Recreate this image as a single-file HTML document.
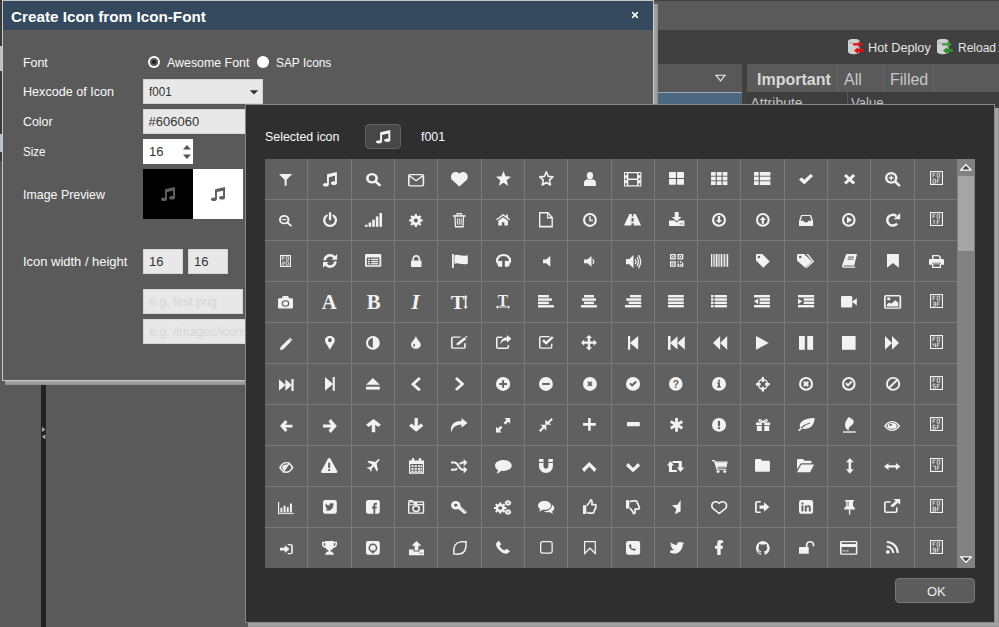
<!DOCTYPE html>
<html><head><meta charset="utf-8">
<style>
*{margin:0;padding:0;box-sizing:border-box}
html,body{width:999px;height:627px;overflow:hidden;background:#5a5a5a;font-family:"Liberation Sans",sans-serif}
.a{position:absolute}
.t{position:absolute;white-space:pre;line-height:1}
.lbl{color:#fafafa;font-size:12.4px}
.inp{position:absolute;background:#e8e8e8;color:#222;font-size:13px;border:1px solid #d6d6d6}
.cell{position:absolute;background:#606060}
</style></head><body>
<!-- background app -->
<div class="a" style="left:0;top:0;width:999px;height:1px;background:#404040"></div>
<div class="a" style="left:0;top:30px;width:999px;height:34px;background:#404040"></div>
<!-- left strip -->
<div class="a" style="left:0;top:0;width:2px;height:46px;background:#3a3a3a"></div>
<div class="a" style="left:0;top:46px;width:2px;height:25px;background:#c0c0c0"></div>
<div class="a" style="left:0;top:71px;width:2px;height:63px;background:#3a3a3a"></div>
<div class="a" style="left:0;top:134px;width:2px;height:18px;background:#b8c0c8"></div>
<div class="a" style="left:0;top:152px;width:2px;height:9px;background:#3a3a3a"></div>
<!-- toolbar texts -->
<div class="t" style="left:868px;top:42px;font-size:12.7px;color:#e6e6e6">Hot Deploy</div>
<div class="t" style="left:957.5px;top:42px;font-size:12.5px;color:#e6e6e6;transform:scaleX(0.96);transform-origin:0 0">Reload</div><div class="a" style="left:998px;top:45px;width:1px;height:1px;background:#8888aa"></div><div class="a" style="left:998px;top:51px;width:1px;height:1px;background:#8888aa"></div>
<!-- left panel header -->
<div class="a" style="left:658px;top:64px;width:84px;height:28px;background:#585858"></div>
<div class="a" style="left:742px;top:64px;width:5px;height:563px;background:#404040"></div>
<div class="a" style="left:658px;top:92px;width:84px;height:535px;background:#4c6880;border-top:1px solid #9aa8b5"></div>
<!-- tabs -->
<div class="a" style="left:747px;top:64px;width:252px;height:28px;background:#5a5a5a"></div>
<div class="a" style="left:837px;top:64px;width:1px;height:28px;background:#676767"></div>
<div class="a" style="left:883px;top:64px;width:1px;height:28px;background:#676767"></div>
<div class="a" style="left:933px;top:64px;width:1px;height:28px;background:#676767"></div>
<div class="t" style="left:757px;top:72px;font-size:16px;font-weight:bold;color:#d8d8d8">Important</div>
<div class="t" style="left:844px;top:72px;font-size:16px;color:#c8c8c8">All</div>
<div class="t" style="left:890px;top:72px;font-size:16px;color:#c8c8c8">Filled</div>
<div class="a" style="left:747px;top:92px;width:252px;height:535px;background:#3e3e3e"></div>
<div class="a" style="left:847px;top:92px;width:1px;height:20px;background:#555"></div>
<div class="t" style="left:750.5px;top:96px;font-size:14px;color:#c0c0c0">Attribute</div>
<div class="t" style="left:851px;top:96px;font-size:14px;color:#c0c0c0;transform:scaleX(0.94);transform-origin:0 0">Value</div>
<!-- dark bar bottom left -->
<div class="a" style="left:41px;top:385px;width:5px;height:242px;background:#222"></div>

<!-- DIALOG -->
<div class="a" style="left:654px;top:4px;width:4px;height:381px;background:linear-gradient(to right,#a4a4a4,#a0a0a0 50%,#8c8c8c)"></div>
<div class="a" style="left:5px;top:381px;width:653px;height:4px;background:linear-gradient(to bottom,#a4a4a4,#a0a0a0 50%,#8c8c8c)"></div>
<div class="a" style="left:2px;top:0;width:652px;height:381px;background:#5a5a5a;border:1px solid #c8c8c8"></div>
<div class="a" style="left:3px;top:1px;width:650px;height:29px;background:#34485e"></div>
<div class="t" style="left:11px;top:9px;font-size:15.25px;font-weight:bold;color:#fff">Create Icon from Icon-Font</div>
<svg class="a" style="left:630px;top:10px;width:10px;height:10px" viewBox="0 0 10 10"><path d="M2.6 2.6L7.4 7.4M7.4 2.6L2.6 7.4" stroke="#fff" stroke-width="1.5" stroke-linecap="round"/></svg>

<div class="t lbl" style="left:23px;top:57px">Font</div>
<div class="t lbl" style="left:23px;top:86px;font-size:12.6px">Hexcode of Icon</div>
<div class="t lbl" style="left:23px;top:116px">Color</div>
<div class="t lbl" style="left:23px;top:146px;transform:scaleX(0.93);transform-origin:0 0">Size</div>
<div class="t lbl" style="left:23px;top:189px">Image Preview</div>
<div class="t lbl" style="left:23px;top:256px;transform:scaleX(1.045);transform-origin:0 0">Icon width / height</div>

<!-- radios -->
<div class="a" style="left:148px;top:56px;width:12px;height:12px;border-radius:50%;background:#fff"></div>
<div class="a" style="left:150px;top:58px;width:8px;height:8px;border-radius:50%;background:#595959"></div><div class="a" style="left:152px;top:60px;width:4px;height:4px;border-radius:50%;background:#1e1e1e"></div>
<div class="t lbl" style="left:167px;top:57px">Awesome Font</div>
<div class="a" style="left:257px;top:56px;width:12px;height:12px;border-radius:50%;background:#fff"></div>
<div class="t lbl" style="left:276px;top:57px;transform:scaleX(0.96);transform-origin:0 0">SAP Icons</div>

<div class="inp" style="left:143px;top:79px;width:120px;height:25px"></div>
<div class="t" style="left:149px;top:85px;font-size:13px;color:#333;transform:scaleX(0.9);transform-origin:0 0">f001</div>
<div class="inp" style="left:143px;top:109px;width:110px;height:25px"></div>
<div class="t" style="left:148.5px;top:115px;font-size:13px;color:#333">#606060</div>
<div class="a" style="left:143px;top:139px;width:50px;height:25px;background:#fff"></div>
<div class="t" style="left:149px;top:145px;font-size:13px;color:#333">16</div>
<div class="a" style="left:143px;top:169px;width:50px;height:50px;background:#000"></div>
<div class="a" style="left:193px;top:169px;width:50px;height:50px;background:#fff"></div>
<div class="inp" style="left:143px;top:249px;width:40px;height:25px"></div>
<div class="t" style="left:149px;top:255px;font-size:13px;color:#333">16</div>
<div class="inp" style="left:188px;top:249px;width:40px;height:25px"></div>
<div class="t" style="left:194px;top:255px;font-size:13px;color:#333">16</div>
<div class="inp" style="left:143px;top:289px;width:100px;height:25px"></div>
<div class="t" style="left:149px;top:295px;font-size:13px;color:#d6d6d6;transform:scaleX(0.95);transform-origin:0 0">e.g. test.png</div>
<div class="inp" style="left:143px;top:319px;width:110px;height:25px"></div>
<div class="t" style="left:149px;top:325px;font-size:13px;color:#d6d6d6;transform:scaleX(0.95);transform-origin:0 0">e.g. /images/icons</div>

<!-- POPUP -->
<div class="a" style="left:995px;top:108px;width:4px;height:519px;background:linear-gradient(to right,#a2a2a2,#a2a2a2 70%,#8a8a8a)"></div>
<div class="a" style="left:248px;top:623px;width:751px;height:4px;background:linear-gradient(to bottom,#a2a2a2,#a2a2a2 70%,#8a8a8a)"></div>
<div class="a" style="left:245px;top:104px;width:750px;height:519px;background:#2f2f2f;border-left:1px solid #888;border-top:1px solid #888;border-right:1px solid #8a8a8a;border-bottom:1px solid #8a8a8a"></div>
<div class="t lbl" style="left:265px;top:131px">Selected icon</div>
<div class="a" style="left:365px;top:124px;width:36px;height:25px;background:#474747;border:1px solid #626262;border-radius:4px"></div>
<div class="t lbl" style="left:421px;top:131px">f001</div>

<div id="grid" class="a" style="left:265px;top:159px;width:692px;height:409px;background:#7a7a7a"></div>
<!-- scrollbar -->
<div class="a" style="left:957px;top:159px;width:18px;height:409px;background:#818181"></div>
<div class="a" style="left:958px;top:176px;width:16px;height:75px;background:#a5a5a5"></div>

<div class="a" style="left:895px;top:578px;width:80px;height:25px;background:#5c5c5c;border:1px solid #777;border-radius:4px"></div>
<div class="t" style="left:927px;top:585px;font-size:13px;color:#eee">OK</div>

<div class="cell" style="left:265px;top:159px;width:42px;height:40px"></div><div class="cell" style="left:308px;top:159px;width:43px;height:40px"></div><div class="cell" style="left:352px;top:159px;width:42px;height:40px"></div><div class="cell" style="left:395px;top:159px;width:42px;height:40px"></div><div class="cell" style="left:438px;top:159px;width:43px;height:40px"></div><div class="cell" style="left:482px;top:159px;width:42px;height:40px"></div><div class="cell" style="left:525px;top:159px;width:42px;height:40px"></div><div class="cell" style="left:568px;top:159px;width:43px;height:40px"></div><div class="cell" style="left:612px;top:159px;width:42px;height:40px"></div><div class="cell" style="left:655px;top:159px;width:42px;height:40px"></div><div class="cell" style="left:698px;top:159px;width:42px;height:40px"></div><div class="cell" style="left:741px;top:159px;width:43px;height:40px"></div><div class="cell" style="left:785px;top:159px;width:42px;height:40px"></div><div class="cell" style="left:828px;top:159px;width:42px;height:40px"></div><div class="cell" style="left:871px;top:159px;width:43px;height:40px"></div><div class="cell" style="left:915px;top:159px;width:42px;height:40px"></div><div class="cell" style="left:265px;top:200px;width:42px;height:40px"></div><div class="cell" style="left:308px;top:200px;width:43px;height:40px"></div><div class="cell" style="left:352px;top:200px;width:42px;height:40px"></div><div class="cell" style="left:395px;top:200px;width:42px;height:40px"></div><div class="cell" style="left:438px;top:200px;width:43px;height:40px"></div><div class="cell" style="left:482px;top:200px;width:42px;height:40px"></div><div class="cell" style="left:525px;top:200px;width:42px;height:40px"></div><div class="cell" style="left:568px;top:200px;width:43px;height:40px"></div><div class="cell" style="left:612px;top:200px;width:42px;height:40px"></div><div class="cell" style="left:655px;top:200px;width:42px;height:40px"></div><div class="cell" style="left:698px;top:200px;width:42px;height:40px"></div><div class="cell" style="left:741px;top:200px;width:43px;height:40px"></div><div class="cell" style="left:785px;top:200px;width:42px;height:40px"></div><div class="cell" style="left:828px;top:200px;width:42px;height:40px"></div><div class="cell" style="left:871px;top:200px;width:43px;height:40px"></div><div class="cell" style="left:915px;top:200px;width:42px;height:40px"></div><div class="cell" style="left:265px;top:241px;width:42px;height:40px"></div><div class="cell" style="left:308px;top:241px;width:43px;height:40px"></div><div class="cell" style="left:352px;top:241px;width:42px;height:40px"></div><div class="cell" style="left:395px;top:241px;width:42px;height:40px"></div><div class="cell" style="left:438px;top:241px;width:43px;height:40px"></div><div class="cell" style="left:482px;top:241px;width:42px;height:40px"></div><div class="cell" style="left:525px;top:241px;width:42px;height:40px"></div><div class="cell" style="left:568px;top:241px;width:43px;height:40px"></div><div class="cell" style="left:612px;top:241px;width:42px;height:40px"></div><div class="cell" style="left:655px;top:241px;width:42px;height:40px"></div><div class="cell" style="left:698px;top:241px;width:42px;height:40px"></div><div class="cell" style="left:741px;top:241px;width:43px;height:40px"></div><div class="cell" style="left:785px;top:241px;width:42px;height:40px"></div><div class="cell" style="left:828px;top:241px;width:42px;height:40px"></div><div class="cell" style="left:871px;top:241px;width:43px;height:40px"></div><div class="cell" style="left:915px;top:241px;width:42px;height:40px"></div><div class="cell" style="left:265px;top:282px;width:42px;height:40px"></div><div class="cell" style="left:308px;top:282px;width:43px;height:40px"></div><div class="cell" style="left:352px;top:282px;width:42px;height:40px"></div><div class="cell" style="left:395px;top:282px;width:42px;height:40px"></div><div class="cell" style="left:438px;top:282px;width:43px;height:40px"></div><div class="cell" style="left:482px;top:282px;width:42px;height:40px"></div><div class="cell" style="left:525px;top:282px;width:42px;height:40px"></div><div class="cell" style="left:568px;top:282px;width:43px;height:40px"></div><div class="cell" style="left:612px;top:282px;width:42px;height:40px"></div><div class="cell" style="left:655px;top:282px;width:42px;height:40px"></div><div class="cell" style="left:698px;top:282px;width:42px;height:40px"></div><div class="cell" style="left:741px;top:282px;width:43px;height:40px"></div><div class="cell" style="left:785px;top:282px;width:42px;height:40px"></div><div class="cell" style="left:828px;top:282px;width:42px;height:40px"></div><div class="cell" style="left:871px;top:282px;width:43px;height:40px"></div><div class="cell" style="left:915px;top:282px;width:42px;height:40px"></div><div class="cell" style="left:265px;top:323px;width:42px;height:40px"></div><div class="cell" style="left:308px;top:323px;width:43px;height:40px"></div><div class="cell" style="left:352px;top:323px;width:42px;height:40px"></div><div class="cell" style="left:395px;top:323px;width:42px;height:40px"></div><div class="cell" style="left:438px;top:323px;width:43px;height:40px"></div><div class="cell" style="left:482px;top:323px;width:42px;height:40px"></div><div class="cell" style="left:525px;top:323px;width:42px;height:40px"></div><div class="cell" style="left:568px;top:323px;width:43px;height:40px"></div><div class="cell" style="left:612px;top:323px;width:42px;height:40px"></div><div class="cell" style="left:655px;top:323px;width:42px;height:40px"></div><div class="cell" style="left:698px;top:323px;width:42px;height:40px"></div><div class="cell" style="left:741px;top:323px;width:43px;height:40px"></div><div class="cell" style="left:785px;top:323px;width:42px;height:40px"></div><div class="cell" style="left:828px;top:323px;width:42px;height:40px"></div><div class="cell" style="left:871px;top:323px;width:43px;height:40px"></div><div class="cell" style="left:915px;top:323px;width:42px;height:40px"></div><div class="cell" style="left:265px;top:364px;width:42px;height:40px"></div><div class="cell" style="left:308px;top:364px;width:43px;height:40px"></div><div class="cell" style="left:352px;top:364px;width:42px;height:40px"></div><div class="cell" style="left:395px;top:364px;width:42px;height:40px"></div><div class="cell" style="left:438px;top:364px;width:43px;height:40px"></div><div class="cell" style="left:482px;top:364px;width:42px;height:40px"></div><div class="cell" style="left:525px;top:364px;width:42px;height:40px"></div><div class="cell" style="left:568px;top:364px;width:43px;height:40px"></div><div class="cell" style="left:612px;top:364px;width:42px;height:40px"></div><div class="cell" style="left:655px;top:364px;width:42px;height:40px"></div><div class="cell" style="left:698px;top:364px;width:42px;height:40px"></div><div class="cell" style="left:741px;top:364px;width:43px;height:40px"></div><div class="cell" style="left:785px;top:364px;width:42px;height:40px"></div><div class="cell" style="left:828px;top:364px;width:42px;height:40px"></div><div class="cell" style="left:871px;top:364px;width:43px;height:40px"></div><div class="cell" style="left:915px;top:364px;width:42px;height:40px"></div><div class="cell" style="left:265px;top:405px;width:42px;height:40px"></div><div class="cell" style="left:308px;top:405px;width:43px;height:40px"></div><div class="cell" style="left:352px;top:405px;width:42px;height:40px"></div><div class="cell" style="left:395px;top:405px;width:42px;height:40px"></div><div class="cell" style="left:438px;top:405px;width:43px;height:40px"></div><div class="cell" style="left:482px;top:405px;width:42px;height:40px"></div><div class="cell" style="left:525px;top:405px;width:42px;height:40px"></div><div class="cell" style="left:568px;top:405px;width:43px;height:40px"></div><div class="cell" style="left:612px;top:405px;width:42px;height:40px"></div><div class="cell" style="left:655px;top:405px;width:42px;height:40px"></div><div class="cell" style="left:698px;top:405px;width:42px;height:40px"></div><div class="cell" style="left:741px;top:405px;width:43px;height:40px"></div><div class="cell" style="left:785px;top:405px;width:42px;height:40px"></div><div class="cell" style="left:828px;top:405px;width:42px;height:40px"></div><div class="cell" style="left:871px;top:405px;width:43px;height:40px"></div><div class="cell" style="left:915px;top:405px;width:42px;height:40px"></div><div class="cell" style="left:265px;top:446px;width:42px;height:40px"></div><div class="cell" style="left:308px;top:446px;width:43px;height:40px"></div><div class="cell" style="left:352px;top:446px;width:42px;height:40px"></div><div class="cell" style="left:395px;top:446px;width:42px;height:40px"></div><div class="cell" style="left:438px;top:446px;width:43px;height:40px"></div><div class="cell" style="left:482px;top:446px;width:42px;height:40px"></div><div class="cell" style="left:525px;top:446px;width:42px;height:40px"></div><div class="cell" style="left:568px;top:446px;width:43px;height:40px"></div><div class="cell" style="left:612px;top:446px;width:42px;height:40px"></div><div class="cell" style="left:655px;top:446px;width:42px;height:40px"></div><div class="cell" style="left:698px;top:446px;width:42px;height:40px"></div><div class="cell" style="left:741px;top:446px;width:43px;height:40px"></div><div class="cell" style="left:785px;top:446px;width:42px;height:40px"></div><div class="cell" style="left:828px;top:446px;width:42px;height:40px"></div><div class="cell" style="left:871px;top:446px;width:43px;height:40px"></div><div class="cell" style="left:915px;top:446px;width:42px;height:40px"></div><div class="cell" style="left:265px;top:487px;width:42px;height:40px"></div><div class="cell" style="left:308px;top:487px;width:43px;height:40px"></div><div class="cell" style="left:352px;top:487px;width:42px;height:40px"></div><div class="cell" style="left:395px;top:487px;width:42px;height:40px"></div><div class="cell" style="left:438px;top:487px;width:43px;height:40px"></div><div class="cell" style="left:482px;top:487px;width:42px;height:40px"></div><div class="cell" style="left:525px;top:487px;width:42px;height:40px"></div><div class="cell" style="left:568px;top:487px;width:43px;height:40px"></div><div class="cell" style="left:612px;top:487px;width:42px;height:40px"></div><div class="cell" style="left:655px;top:487px;width:42px;height:40px"></div><div class="cell" style="left:698px;top:487px;width:42px;height:40px"></div><div class="cell" style="left:741px;top:487px;width:43px;height:40px"></div><div class="cell" style="left:785px;top:487px;width:42px;height:40px"></div><div class="cell" style="left:828px;top:487px;width:42px;height:40px"></div><div class="cell" style="left:871px;top:487px;width:43px;height:40px"></div><div class="cell" style="left:915px;top:487px;width:42px;height:40px"></div><div class="cell" style="left:265px;top:528px;width:42px;height:40px"></div><div class="cell" style="left:308px;top:528px;width:43px;height:40px"></div><div class="cell" style="left:352px;top:528px;width:42px;height:40px"></div><div class="cell" style="left:395px;top:528px;width:42px;height:40px"></div><div class="cell" style="left:438px;top:528px;width:43px;height:40px"></div><div class="cell" style="left:482px;top:528px;width:42px;height:40px"></div><div class="cell" style="left:525px;top:528px;width:42px;height:40px"></div><div class="cell" style="left:568px;top:528px;width:43px;height:40px"></div><div class="cell" style="left:612px;top:528px;width:42px;height:40px"></div><div class="cell" style="left:655px;top:528px;width:42px;height:40px"></div><div class="cell" style="left:698px;top:528px;width:42px;height:40px"></div><div class="cell" style="left:741px;top:528px;width:43px;height:40px"></div><div class="cell" style="left:785px;top:528px;width:42px;height:40px"></div><div class="cell" style="left:828px;top:528px;width:42px;height:40px"></div><div class="cell" style="left:871px;top:528px;width:43px;height:40px"></div><div class="cell" style="left:915px;top:528px;width:42px;height:40px"></div>
<svg class="a" style="left:279.35px;top:174.25px;width:13.20px;height:11.80px;color:#f2f2f2;fill:#f2f2f2;overflow:visible" viewBox="0.000 0.000 16.000 16.000" preserveAspectRatio="none"><path fill-rule="nonzero" d="M0 0H16L9.2 7.8V16H6.8V7.8Z"/></svg>
<svg class="a" style="left:323.05px;top:171.95px;width:13.90px;height:14.60px;color:#f2f2f2;fill:#f2f2f2;overflow:visible" viewBox="0.000 0.000 16.000 16.000" preserveAspectRatio="none"><path fill-rule="nonzero" d="M4.6 2.6L16 0V12.4H13.8V4.2L6.8 5.8V14H4.6Z"/><ellipse cx="3.3" cy="14" rx="3.3" ry="2"/><ellipse cx="12.6" cy="12.2" rx="3.4" ry="2"/></svg>
<svg class="a" style="left:366.05px;top:173.25px;width:15.00px;height:13.30px;color:#f2f2f2;fill:#f2f2f2;overflow:visible" viewBox="-0.050 -0.050 16.100 16.300" preserveAspectRatio="none"><circle cx="6.4" cy="6.4" r="5" fill="none" stroke="currentColor" stroke-width="2.9"/><path fill="none" stroke="currentColor" stroke-width="2.9" stroke-linecap="round" stroke-linejoin="miter" d="M10.4 10.6L14.6 14.8"/></svg>
<svg class="a" style="left:407.95px;top:173.65px;width:16.20px;height:12.40px;color:#f2f2f2;fill:#f2f2f2;overflow:visible" viewBox="0.000 0.000 16.000 16.000" preserveAspectRatio="none"><rect x="0.8" y="0.8" width="14.4" height="14.4" rx="1.2" fill="none" stroke="currentColor" stroke-width="1.6"/><path fill="none" stroke="currentColor" stroke-width="1.6" stroke-linecap="butt" stroke-linejoin="miter" d="M1.2 2.2L8 8.6L14.8 2.2"/></svg>
<svg class="a" style="left:450.75px;top:171.75px;width:16.80px;height:14.40px;color:#f2f2f2;fill:#f2f2f2;overflow:visible" viewBox="0.000 0.250 16.000 15.750" preserveAspectRatio="none"><path fill-rule="nonzero" d="M8 16L1.4 9.4C-0.5 7.4 -0.4 3.2 1.4 1.5C3.3 -0.4 6.6 -0.1 8 2.3C9.4 -0.1 12.7 -0.4 14.6 1.5C16.4 3.2 16.5 7.4 14.6 9.4Z"/></svg>
<svg class="a" style="left:495.95px;top:171.35px;width:15.00px;height:14.80px;color:#f2f2f2;fill:#f2f2f2;overflow:visible" viewBox="0.050 0.050 15.900 15.900" preserveAspectRatio="none"><path fill-rule="nonzero" d="M8 0L10.12 5.78L16 6.11L11.43 10.02L12.94 16L8 12.64L3.06 16L4.57 10.02L0 6.11L5.88 5.78Z"/></svg>
<svg class="a" style="left:539.05px;top:171.35px;width:14.70px;height:14.80px;color:#f2f2f2;fill:#f2f2f2;overflow:visible" viewBox="0.150 0.150 15.700 15.700" preserveAspectRatio="none"><path fill="none" stroke="currentColor" stroke-width="1.7" stroke-linecap="butt" stroke-linejoin="round" d="M8 1L10.01 5.83L15 6.35L11.25 9.85L12.33 15L8 12.33L3.67 15L4.75 9.85L1 6.35L5.99 5.83Z"/></svg>
<svg class="a" style="left:583.75px;top:172.25px;width:11.90px;height:13.90px;color:#f2f2f2;fill:#f2f2f2;overflow:visible" viewBox="0.000 0.000 16.000 16.000" preserveAspectRatio="none"><circle cx="8" cy="4.2" r="4.2"/><path fill-rule="nonzero" d="M0 16V12.6C0 10.3 1.8 8.6 4 8.6H12C14.2 8.6 16 10.3 16 12.6V16Z"/></svg>
<svg class="a" style="left:623.95px;top:172.15px;width:17.40px;height:14.50px;color:#f2f2f2;fill:#f2f2f2;overflow:visible" viewBox="0.000 0.000 16.000 16.000" preserveAspectRatio="none"><path fill-rule="evenodd" d="M0 0H16V16H0Z M1 1.2V3.6H2.6V1.2Z M1 6.8V9.2H2.6V6.8Z M1 12.4V14.8H2.6V12.4Z M13.4 1.2V3.6H15V1.2Z M13.4 6.8V9.2H15V6.8Z M13.4 12.4V14.8H15V12.4Z M4 1.4V7.2H12V1.4Z M4 8.8V14.6H12V8.8Z"/></svg>
<svg class="a" style="left:669.05px;top:172.15px;width:15.00px;height:12.80px;color:#f2f2f2;fill:#f2f2f2;overflow:visible" viewBox="0.000 0.000 16.000 16.000" preserveAspectRatio="none"><rect x="0" y="0" width="7.4" height="7.4" rx="0.6"/><rect x="8.6" y="0" width="7.4" height="7.4" rx="0.6"/><rect x="0" y="8.6" width="7.4" height="7.4" rx="0.6"/><rect x="8.6" y="8.6" width="7.4" height="7.4" rx="0.6"/></svg>
<svg class="a" style="left:710.75px;top:172.25px;width:16.40px;height:13.00px;color:#f2f2f2;fill:#f2f2f2;overflow:visible" viewBox="0.000 0.000 16.000 16.000" preserveAspectRatio="none"><rect x="0" y="0" width="4.6" height="4.6"/><rect x="0" y="5.7" width="4.6" height="4.6"/><rect x="0" y="11.4" width="4.6" height="4.6"/><rect x="5.7" y="0" width="4.6" height="4.6"/><rect x="5.7" y="5.7" width="4.6" height="4.6"/><rect x="5.7" y="11.4" width="4.6" height="4.6"/><rect x="11.4" y="0" width="4.6" height="4.6"/><rect x="11.4" y="5.7" width="4.6" height="4.6"/><rect x="11.4" y="11.4" width="4.6" height="4.6"/></svg>
<svg class="a" style="left:753.75px;top:172.25px;width:16.40px;height:13.00px;color:#f2f2f2;fill:#f2f2f2;overflow:visible" viewBox="0.000 0.000 16.000 16.000" preserveAspectRatio="none"><rect x="0" y="0" width="4.6" height="4.6"/><rect x="5.7" y="0" width="10.3" height="4.6"/><rect x="0" y="5.7" width="4.6" height="4.6"/><rect x="5.7" y="5.7" width="10.3" height="4.6"/><rect x="0" y="11.4" width="4.6" height="4.6"/><rect x="5.7" y="11.4" width="10.3" height="4.6"/></svg>
<svg class="a" style="left:799.05px;top:174.45px;width:14.10px;height:10.50px;color:#f2f2f2;fill:#f2f2f2;overflow:visible" viewBox="0.000 0.000 16.000 15.950" preserveAspectRatio="none"><path fill-rule="nonzero" d="M0 8.4L2.9 5.5L6 8.6L13.1 0L16 2.9L6 16Z"/></svg>
<svg class="a" style="left:843.75px;top:174.45px;width:11.20px;height:10.50px;color:#f2f2f2;fill:#f2f2f2;overflow:visible" viewBox="0.000 0.000 16.000 16.000" preserveAspectRatio="none"><path fill-rule="nonzero" d="M0 3L3 0L8 5L13 0L16 3L11 8L16 13L13 16L8 11L3 16L0 13L5 8Z"/></svg>
<svg class="a" style="left:884.75px;top:172.15px;width:15.40px;height:14.50px;color:#f2f2f2;fill:#f2f2f2;overflow:visible" viewBox="-0.050 0.050 16.150 16.250" preserveAspectRatio="none"><circle cx="6.5" cy="6.6" r="5.3" fill="none" stroke="currentColor" stroke-width="2.5"/><path fill="none" stroke="currentColor" stroke-width="2.6" stroke-linecap="round" stroke-linejoin="miter" d="M10.6 10.8L14.8 15"/><path fill="none" stroke="currentColor" stroke-width="1.4" stroke-linecap="butt" stroke-linejoin="miter" d="M6.5 3.9V9.3M3.8 6.6H9.2"/></svg>
<svg class="a" style="left:930.0px;top:171.0px;width:13.0px;height:14.0px" viewBox="0 0 13.0 14.0"><rect x="0.55" y="0.55" width="11.9" height="12.9" fill="none" stroke="#f2f2f2" stroke-width="1.1"/><path d="M5.40 2.20L3.00 2.20L3.00 6.20M3.00 4.20L5.00 4.20M7.20 2.20L9.60 2.20L9.60 6.20L7.20 6.20L7.20 2.20M3.00 8.20L5.40 8.20L5.40 12.20L3.00 12.20L3.00 8.20M9.60 8.20L7.20 8.20L7.20 12.20M7.20 10.20L9.20 10.20" fill="none" stroke="#d0d0d0" stroke-width="1"/></svg>
<svg class="a" style="left:279.05px;top:215.45px;width:12.90px;height:11.50px;color:#f2f2f2;fill:#f2f2f2;overflow:visible" viewBox="-0.050 0.050 16.150 16.250" preserveAspectRatio="none"><circle cx="6.5" cy="6.6" r="5.3" fill="none" stroke="currentColor" stroke-width="2.5"/><path fill="none" stroke="currentColor" stroke-width="2.6" stroke-linecap="round" stroke-linejoin="miter" d="M10.6 10.8L14.8 15"/><path fill="none" stroke="currentColor" stroke-width="1.5" stroke-linecap="butt" stroke-linejoin="miter" d="M3.8 6.6H9.2"/></svg>
<svg class="a" style="left:322.95px;top:211.95px;width:14.10px;height:15.00px;color:#f2f2f2;fill:#f2f2f2;overflow:visible" viewBox="0.700 0.000 14.600 16.200" preserveAspectRatio="none"><path fill="none" stroke="currentColor" stroke-width="2.4" stroke-linecap="round" stroke-linejoin="miter" d="M11.5 3.9A6.1 6.1 0 1 1 4.5 3.9"/><path fill="none" stroke="currentColor" stroke-width="2.4" stroke-linecap="round" stroke-linejoin="miter" d="M8 1.2V8"/></svg>
<svg class="a" style="left:364.75px;top:213.15px;width:17.00px;height:13.80px;color:#f2f2f2;fill:#f2f2f2;overflow:visible" viewBox="0.000 0.000 16.000 16.000" preserveAspectRatio="none"><rect x="0" y="13.6" width="2.4" height="2.4"/><rect x="3.4" y="11" width="2.4" height="5"/><rect x="6.8" y="7.8" width="2.4" height="8.2"/><rect x="10.2" y="4" width="2.4" height="12"/><rect x="13.6" y="0" width="2.4" height="16"/></svg>
<svg class="a" style="left:409.05px;top:214.05px;width:13.70px;height:12.90px;color:#f2f2f2;fill:#f2f2f2;overflow:visible" viewBox="0.100 0.100 15.800 15.800" preserveAspectRatio="none"><path fill-rule="evenodd" d="M13.75 6.67L15.89 6.69L15.89 9.31L13.75 9.33L13.01 11.12L14.51 12.65L12.65 14.51L11.12 13.01L9.33 13.75L9.31 15.89L6.69 15.89L6.67 13.75L4.88 13.01L3.35 14.51L1.49 12.65L2.99 11.12L2.25 9.33L0.11 9.31L0.11 6.69L2.25 6.67L2.99 4.88L1.49 3.35L3.35 1.49L4.88 2.99L6.67 2.25L6.69 0.11L9.31 0.11L9.33 2.25L11.12 2.99L12.65 1.49L14.51 3.35L13.01 4.88ZM5.6 8A2.4 2.4 0 1 0 10.4 8A2.4 2.4 0 1 0 5.6 8Z"/></svg>
<svg class="a" style="left:452.95px;top:212.75px;width:12.50px;height:14.40px;color:#f2f2f2;fill:#f2f2f2;overflow:visible" viewBox="0.000 0.050 16.000 15.950" preserveAspectRatio="none"><path fill="none" stroke="currentColor" stroke-width="1.5" stroke-linecap="butt" stroke-linejoin="miter" d="M5.2 2.6V0.8H10.8V2.6"/><rect x="0" y="2.4" width="16" height="1.8"/><path fill="none" stroke="currentColor" stroke-width="1.6" stroke-linecap="butt" stroke-linejoin="miter" d="M2.6 3.8L3.1 15.2H12.9L13.4 3.8"/><path fill="none" stroke="currentColor" stroke-width="1.2" stroke-linecap="butt" stroke-linejoin="miter" d="M5.6 6V13M8 6V13M10.4 6V13"/></svg>
<svg class="a" style="left:496.25px;top:214.15px;width:14.20px;height:11.60px;color:#f2f2f2;fill:#f2f2f2;overflow:visible" viewBox="0.000 0.000 16.000 16.000" preserveAspectRatio="none"><path fill-rule="nonzero" d="M8 0L0 7.4L1.1 8.6L8 2.4L14.9 8.6L16 7.4L13.4 5V0.6H11.4V3.2Z"/><path fill-rule="nonzero" d="M2.6 9.2V16H6.6V11.4H9.4V16H13.4V9.2L8 4.4Z"/></svg>
<svg class="a" style="left:539.05px;top:212.05px;width:13.90px;height:15.40px;color:#f2f2f2;fill:#f2f2f2;overflow:visible" viewBox="0.000 0.000 16.000 16.000" preserveAspectRatio="none"><path fill="none" stroke="currentColor" stroke-width="1.6" stroke-linecap="butt" stroke-linejoin="miter" d="M0.8 0.8H10.2L15.2 5.8V15.2H0.8Z"/><path fill="none" stroke="currentColor" stroke-width="1.4" stroke-linecap="butt" stroke-linejoin="miter" d="M10 0.8V6H15.2"/></svg>
<svg class="a" style="left:582.85px;top:213.25px;width:13.90px;height:13.90px;color:#f2f2f2;fill:#f2f2f2;overflow:visible" viewBox="0.000 0.000 16.000 16.000" preserveAspectRatio="none"><circle cx="8" cy="8" r="6.8" fill="none" stroke="currentColor" stroke-width="2.4"/><path fill="none" stroke="currentColor" stroke-width="1.7" stroke-linecap="butt" stroke-linejoin="miter" d="M8 3.8V8.6H11.4"/></svg>
<svg class="a" style="left:623.95px;top:214.35px;width:17.10px;height:11.60px;color:#f2f2f2;fill:#f2f2f2;overflow:visible" viewBox="0.000 0.000 16.000 16.000" preserveAspectRatio="none"><path fill-rule="evenodd" d="M5 0H7.3V3.6H8.7V0H11L16 16H9.2L9 12.6H7L6.8 16H0Z M7.1 5.6L6.9 10.4H9.1L8.9 5.6Z"/></svg>
<svg class="a" style="left:669.05px;top:211.95px;width:15.40px;height:14.00px;color:#f2f2f2;fill:#f2f2f2;overflow:visible" viewBox="0.000 0.000 16.000 16.000" preserveAspectRatio="none"><path fill-rule="nonzero" d="M6 0H10V5.6H13.2L8 10.6L2.8 5.6H6Z"/><path fill-rule="nonzero" d="M0 9.6H5.6L8 12L10.4 9.6H16V16H0Z"/><rect x="11.2" y="13" width="1.2" height="1.2" fill="#606060"/><rect x="13.4" y="13" width="1.2" height="1.2" fill="#606060"/></svg>
<svg class="a" style="left:711.75px;top:213.15px;width:14.00px;height:13.80px;color:#f2f2f2;fill:#f2f2f2;overflow:visible" viewBox="0.000 0.000 16.000 16.000" preserveAspectRatio="none"><circle cx="8" cy="8" r="6.8" fill="none" stroke="currentColor" stroke-width="2.4"/><path fill-rule="nonzero" d="M6.7 3.6H9.3V8H11.6L8 11.8L4.4 8H6.7Z"/></svg>
<svg class="a" style="left:756.05px;top:213.15px;width:13.70px;height:13.80px;color:#f2f2f2;fill:#f2f2f2;overflow:visible" viewBox="0.000 0.000 16.000 16.000" preserveAspectRatio="none"><circle cx="8" cy="8" r="6.8" fill="none" stroke="currentColor" stroke-width="2.4"/><path fill-rule="nonzero" d="M6.7 12.4H9.3V8H11.6L8 4.2L4.4 8H6.7Z"/></svg>
<svg class="a" style="left:799.05px;top:214.85px;width:14.10px;height:11.10px;color:#f2f2f2;fill:#f2f2f2;overflow:visible" viewBox="0.000 0.000 16.000 16.000" preserveAspectRatio="none"><path fill-rule="evenodd" d="M2.4 0H13.6L16 8.6V16H0V8.6Z M3.6 1.6L1.8 8.2H5.2L6.4 10.6H9.6L10.8 8.2H14.2L12.4 1.6Z"/></svg>
<svg class="a" style="left:842.05px;top:213.15px;width:13.60px;height:13.80px;color:#f2f2f2;fill:#f2f2f2;overflow:visible" viewBox="0.000 0.000 16.000 16.000" preserveAspectRatio="none"><circle cx="8" cy="8" r="6.8" fill="none" stroke="currentColor" stroke-width="2.4"/><path fill-rule="nonzero" d="M5.8 4.2L12 8L5.8 11.8Z"/></svg>
<svg class="a" style="left:885.95px;top:213.15px;width:14.20px;height:13.80px;color:#f2f2f2;fill:#f2f2f2;overflow:visible" viewBox="0.500 0.400 15.500 15.700" preserveAspectRatio="none"><path fill="none" stroke="currentColor" stroke-width="2.8" stroke-linecap="butt" stroke-linejoin="miter" d="M12.67 12.52A6.1 6.1 0 1 1 11.76 3.79"/><path fill-rule="nonzero" d="M16 0.4V7.6H8.8Z"/></svg>
<svg class="a" style="left:930.0px;top:212.0px;width:13.0px;height:14.0px" viewBox="0 0 13.0 14.0"><rect x="0.55" y="0.55" width="11.9" height="12.9" fill="none" stroke="#f2f2f2" stroke-width="1.1"/><path d="M5.40 2.20L3.00 2.20L3.00 6.20M3.00 4.20L5.00 4.20M7.20 2.20L9.60 2.20L9.60 6.20L7.20 6.20L7.20 2.20M4.20 8.20L4.20 12.20M3.30 8.80L4.20 8.20M9.60 8.20L7.20 8.20L7.20 12.20M7.20 10.20L9.20 10.20" fill="none" stroke="#d0d0d0" stroke-width="1"/></svg>
<svg class="a" style="left:280.0px;top:255.0px;width:11.0px;height:12.0px" viewBox="0 0 11.0 12.0"><rect x="0.55" y="0.55" width="9.9" height="10.9" fill="none" stroke="#f2f2f2" stroke-width="1.1"/><path d="M4.60 1.80L2.40 1.80L2.40 5.00M2.40 3.40L4.20 3.40M6.20 1.80L8.40 1.80L8.40 5.00L6.20 5.00L6.20 1.80M2.40 6.80L4.60 6.80L4.60 8.40L2.40 8.40L2.40 10.00L4.60 10.00M6.20 6.80L8.40 6.80L8.40 10.00L6.20 10.00L6.20 6.80" fill="none" stroke="#d0d0d0" stroke-width="1"/></svg>
<svg class="a" style="left:322.95px;top:254.15px;width:14.10px;height:13.80px;color:#f2f2f2;fill:#f2f2f2;overflow:visible" viewBox="0.000 0.400 16.000 15.200" preserveAspectRatio="none"><path fill="none" stroke="currentColor" stroke-width="2.8" stroke-linecap="butt" stroke-linejoin="miter" d="M1.82 7.46A6.2 6.2 0 0 1 12.89 4.18"/><path fill-rule="nonzero" d="M16 0.4V6.8H9.6Z"/><path fill="none" stroke="currentColor" stroke-width="2.8" stroke-linecap="butt" stroke-linejoin="miter" d="M14.18 8.54A6.2 6.2 0 0 1 3.11 11.82"/><path fill-rule="nonzero" d="M0 15.6V9.2H6.4Z"/></svg>
<svg class="a" style="left:365.15px;top:254.15px;width:16.30px;height:12.80px;color:#f2f2f2;fill:#f2f2f2;overflow:visible" viewBox="0.000 0.000 16.000 16.000" preserveAspectRatio="none"><path fill-rule="evenodd" d="M1.2 0H14.8Q16 0 16 1.2V14.8Q16 16 14.8 16H1.2Q0 16 0 14.8V1.2Q0 0 1.2 0Z M1.8 4.4V14.2H14.2V4.4Z"/><rect x="3" y="6" width="1.8" height="1.6"/><rect x="6" y="6" width="7" height="1.6"/><rect x="3" y="8.7" width="1.8" height="1.6"/><rect x="6" y="8.7" width="7" height="1.6"/><rect x="3" y="11.4" width="1.8" height="1.6"/><rect x="6" y="11.4" width="7" height="1.6"/></svg>
<svg class="a" style="left:411.25px;top:255.05px;width:10.50px;height:11.90px;color:#f2f2f2;fill:#f2f2f2;overflow:visible" viewBox="0.000 -0.900 16.000 16.900" preserveAspectRatio="none"><path fill="none" stroke="currentColor" stroke-width="2.6" stroke-linecap="butt" stroke-linejoin="miter" d="M3.2 7.4V5.2A4.8 4.8 0 0 1 12.8 5.2V7.4"/><rect x="0" y="7" width="16" height="9" rx="0.8"/></svg>
<svg class="a" style="left:451.75px;top:254.25px;width:15.80px;height:13.90px;color:#f2f2f2;fill:#f2f2f2;overflow:visible" viewBox="0.200 0.000 15.800 16.000" preserveAspectRatio="none"><rect x="0.2" y="0" width="1.8" height="16"/><path fill-rule="nonzero" d="M2.6 1.6C6 -0.6 9.6 3.6 16 1.4V11.2C9.6 13.4 6 9.2 2.6 11.4Z"/></svg>
<svg class="a" style="left:496.25px;top:254.25px;width:15.10px;height:12.80px;color:#f2f2f2;fill:#f2f2f2;overflow:visible" viewBox="0.000 0.200 16.000 15.800" preserveAspectRatio="none"><path fill="none" stroke="currentColor" stroke-width="2.4" stroke-linecap="butt" stroke-linejoin="miter" d="M2.11 11.6A6.8 6.8 0 1 1 13.89 11.6"/><path fill-rule="nonzero" d="M1.6 9.2L6.6 8.4V16H4Q1.6 16 1.6 13.6Z"/><path fill-rule="nonzero" d="M14.4 9.2L9.4 8.4V16H12Q14.4 16 14.4 13.6Z"/></svg>
<svg class="a" style="left:543.05px;top:255.95px;width:7.30px;height:10.80px;color:#f2f2f2;fill:#f2f2f2;overflow:visible" viewBox="0.000 0.000 16.000 16.000" preserveAspectRatio="none"><path fill-rule="nonzero" d="M0 5.2H7L16 0V16L7 10.8H0Z"/></svg>
<svg class="a" style="left:584.05px;top:255.95px;width:10.40px;height:10.80px;color:#f2f2f2;fill:#f2f2f2;overflow:visible" viewBox="0.000 0.000 15.200 16.000" preserveAspectRatio="none"><path fill-rule="nonzero" d="M0 5.2H5L11 0V16L5 10.8H0Z"/><path fill="none" stroke="currentColor" stroke-width="1.8" stroke-linecap="round" stroke-linejoin="miter" d="M13.2 5.2Q15.4 8 13.2 10.8"/></svg>
<svg class="a" style="left:626.05px;top:254.65px;width:15.30px;height:13.30px;color:#f2f2f2;fill:#f2f2f2;overflow:visible" viewBox="0.000 0.900 16.300 14.200" preserveAspectRatio="none"><path fill-rule="nonzero" d="M0 5.2H3.6L8 1V15L3.6 10.8H0Z"/><path fill="none" stroke="currentColor" stroke-width="1.4" stroke-linecap="round" stroke-linejoin="miter" d="M10 6Q11.4 8 10 10"/><path fill="none" stroke="currentColor" stroke-width="1.4" stroke-linecap="round" stroke-linejoin="miter" d="M11.8 3.8Q14.8 8 11.8 12.2"/><path fill="none" stroke="currentColor" stroke-width="1.4" stroke-linecap="round" stroke-linejoin="miter" d="M13.6 1.6Q17.6 8 13.6 14.4"/></svg>
<svg class="a" style="left:669.95px;top:254.15px;width:13.30px;height:12.80px;color:#f2f2f2;fill:#f2f2f2;overflow:visible" viewBox="0.000 0.000 16.000 16.000" preserveAspectRatio="none"><path fill-rule="evenodd" d="M0 0H7V7H0Z M1.6 1.6V5.4H5.4V1.6Z M2.6 2.6H4.4V4.4H2.6Z"/><path fill-rule="evenodd" d="M9 0H16V7H9Z M10.6 1.6V5.4H14.4V1.6Z M11.6 2.6H13.4V4.4H11.6Z"/><path fill-rule="evenodd" d="M0 9H7V16H0Z M1.6 10.6V14.4H5.4V10.6Z M2.6 11.6H4.4V13.4H2.6Z"/><rect x="9" y="9" width="1.6" height="1.6"/><rect x="12" y="9" width="2" height="2"/><rect x="9" y="12" width="2" height="4"/><rect x="12" y="12.4" width="1.6" height="1.6"/><rect x="14.4" y="11" width="1.6" height="5"/><rect x="11.4" y="14.4" width="3" height="1.6"/></svg>
<svg class="a" style="left:710.75px;top:254.15px;width:17.20px;height:12.80px;color:#f2f2f2;fill:#f2f2f2;overflow:visible" viewBox="0.000 0.000 16.000 16.000" preserveAspectRatio="none"><rect x="0" y="0" width="1.2" height="16"/><rect x="1.9" y="0" width="0.6" height="16"/><rect x="3.1" y="0" width="0.9" height="16"/><rect x="4.6" y="0" width="1.4" height="16"/><rect x="6.6" y="0" width="0.6" height="16"/><rect x="7.8" y="0" width="0.6" height="16"/><rect x="9" y="0" width="1.4" height="16"/><rect x="11" y="0" width="0.6" height="16"/><rect x="12.2" y="0" width="0.9" height="16"/><rect x="13.7" y="0" width="0.6" height="16"/><rect x="14.8" y="0" width="1.2" height="16"/></svg>
<svg class="a" style="left:756.05px;top:254.15px;width:13.70px;height:13.80px;color:#f2f2f2;fill:#f2f2f2;overflow:visible" viewBox="0.000 0.000 16.000 16.000" preserveAspectRatio="none"><path fill-rule="nonzero" d="M0 1.2Q0 0 1.2 0H7.4L16 8.6L8.6 16L0 7.4Z"/><circle cx="3.4" cy="3.4" r="1.4" fill="#606060"/></svg>
<svg class="a" style="left:796.95px;top:254.15px;width:17.10px;height:13.80px;color:#f2f2f2;fill:#f2f2f2;overflow:visible" viewBox="0.000 0.000 16.000 14.000" preserveAspectRatio="none"><path fill-rule="nonzero" d="M0 1.2Q0 0 1.2 0H6.6L14 7.6L7.6 14L0 6.6Z"/><circle cx="3" cy="3" r="1.2" fill="#606060"/><path fill-rule="nonzero" d="M8.8 0H10.4L16 7.6L9.6 14H8L14.4 7.6Z"/></svg>
<svg class="a" style="left:842.05px;top:254.15px;width:15.00px;height:13.80px;color:#f2f2f2;fill:#f2f2f2;overflow:visible" viewBox="0.000 0.000 16.000 16.000" preserveAspectRatio="none"><path fill-rule="nonzero" d="M4.6 0H16L13 13.2H2.4Q1.6 13.2 1.6 14Q1.6 14.6 2.4 14.6H14.2L13.8 16H2Q0 16 0 14V13.4Z"/><rect x="6.4" y="3" width="6.4" height="1.2" fill="#606060"/><rect x="5.8" y="5.4" width="6.4" height="1.2" fill="#606060"/></svg>
<svg class="a" style="left:886.85px;top:254.15px;width:11.90px;height:13.80px;color:#f2f2f2;fill:#f2f2f2;overflow:visible" viewBox="0.000 0.000 16.000 16.000" preserveAspectRatio="none"><path fill-rule="nonzero" d="M0 0H16V16L8 10.4L0 16Z"/></svg>
<svg class="a" style="left:929.05px;top:255.05px;width:15.00px;height:12.90px;color:#f2f2f2;fill:#f2f2f2;overflow:visible" viewBox="0.000 0.000 16.000 16.000" preserveAspectRatio="none"><path fill-rule="nonzero" d="M3.2 0H10.4L12.8 2.4V5H11.2V2.8L10 1.6H4.8V5H3.2Z"/><path fill-rule="nonzero" d="M1.2 5H14.8Q16 5 16 6.2V12H12.8V9.6H3.2V12H0V6.2Q0 5 1.2 5Z"/><path fill-rule="evenodd" d="M3.2 10.4H12.8V16H3.2Z M4.6 11.6V14.6H11.4V11.6Z"/></svg>
<svg class="a" style="left:278.15px;top:296.35px;width:15.00px;height:12.60px;color:#f2f2f2;fill:#f2f2f2;overflow:visible" viewBox="0.000 0.400 16.000 15.600" preserveAspectRatio="none"><path fill-rule="nonzero" d="M1.4 3.2H4.2L5.2 0.4H10.8L11.8 3.2H14.6Q16 3.2 16 4.6V14.6Q16 16 14.6 16H1.4Q0 16 0 14.6V4.6Q0 3.2 1.4 3.2Z"/><circle cx="8" cy="9.6" r="3.4" fill="none" stroke="#606060" stroke-width="1.3"/></svg>
<svg class="a" style="left:322.05px;top:295.15px;width:14.70px;height:13.80px;color:#f2f2f2;fill:#f2f2f2;overflow:visible" viewBox="0.600 2.050 14.850 13.850" preserveAspectRatio="none"><text x="8" y="15.9" font-family="Liberation Serif" font-size="21" font-weight="bold" font-style="normal" text-anchor="middle">A</text></svg>
<svg class="a" style="left:366.85px;top:295.15px;width:12.90px;height:13.80px;color:#f2f2f2;fill:#f2f2f2;overflow:visible" viewBox="1.350 2.250 13.050 13.800" preserveAspectRatio="none"><text x="8" y="16" font-family="Liberation Serif" font-size="21" font-weight="bold" font-style="normal" text-anchor="middle">B</text></svg>
<svg class="a" style="left:411.25px;top:295.15px;width:9.30px;height:13.80px;color:#f2f2f2;fill:#f2f2f2;overflow:visible" viewBox="3.700 2.250 9.000 13.750" preserveAspectRatio="none"><text x="8" y="16" font-family="Liberation Serif" font-size="21" font-weight="bold" font-style="italic" text-anchor="middle">I</text></svg>
<svg class="a" style="left:450.75px;top:295.25px;width:16.80px;height:13.90px;color:#f2f2f2;fill:#f2f2f2;overflow:visible" viewBox="-1.100 0.050 17.100 15.950" preserveAspectRatio="none"><text x="5.6" y="16" font-family="Liberation Serif" font-size="21" font-weight="bold" font-style="normal" text-anchor="middle">T</text><path fill-rule="nonzero" d="M13.8 0L16 2.8H14.6V13.2H16L13.8 16L11.6 13.2H13V2.8H11.6Z"/></svg>
<svg class="a" style="left:496.25px;top:295.25px;width:13.90px;height:13.90px;color:#f2f2f2;fill:#f2f2f2;overflow:visible" viewBox="0.050 1.350 15.900 15.050" preserveAspectRatio="none"><text x="8" y="12.8" font-family="Liberation Serif" font-size="17.5" font-weight="bold" font-style="normal" text-anchor="middle">T</text><path fill-rule="nonzero" d="M0 14.4L2.2 12.4V13.8H13.8V12.4L16 14.4L13.8 16.4V15H2.2V16.4Z"/></svg>
<svg class="a" style="left:537.85px;top:295.25px;width:15.90px;height:12.50px;color:#f2f2f2;fill:#f2f2f2;overflow:visible" viewBox="0.000 0.000 16.000 16.000" preserveAspectRatio="none"><rect x="0" y="0" width="11" height="3.1"/><rect x="0" y="4.3" width="14" height="3.1"/><rect x="0" y="8.6" width="11" height="3.1"/><rect x="0" y="12.9" width="16" height="3.1"/></svg>
<svg class="a" style="left:581.15px;top:295.25px;width:15.90px;height:12.50px;color:#f2f2f2;fill:#f2f2f2;overflow:visible" viewBox="0.000 0.000 16.000 16.000" preserveAspectRatio="none"><rect x="3" y="0" width="10" height="3.1"/><rect x="1" y="4.3" width="14" height="3.1"/><rect x="3" y="8.6" width="10" height="3.1"/><rect x="0" y="12.9" width="16" height="3.1"/></svg>
<svg class="a" style="left:625.15px;top:295.15px;width:16.20px;height:12.40px;color:#f2f2f2;fill:#f2f2f2;overflow:visible" viewBox="0.000 0.000 16.000 16.000" preserveAspectRatio="none"><rect x="5" y="0" width="11" height="3.1"/><rect x="1.2" y="4.3" width="14.8" height="3.1"/><rect x="3.6" y="8.6" width="12.4" height="3.1"/><rect x="0" y="12.9" width="16" height="3.1"/></svg>
<svg class="a" style="left:668.25px;top:295.15px;width:15.80px;height:12.40px;color:#f2f2f2;fill:#f2f2f2;overflow:visible" viewBox="0.000 0.000 16.000 16.000" preserveAspectRatio="none"><rect x="0" y="0" width="16" height="3.1"/><rect x="0" y="4.3" width="16" height="3.1"/><rect x="0" y="8.6" width="16" height="3.1"/><rect x="0" y="12.9" width="16" height="3.1"/></svg>
<svg class="a" style="left:711.25px;top:295.15px;width:15.90px;height:12.40px;color:#f2f2f2;fill:#f2f2f2;overflow:visible" viewBox="0.000 0.000 16.000 16.000" preserveAspectRatio="none"><rect x="0" y="0" width="2.6" height="3.1"/><rect x="0" y="4.3" width="2.6" height="3.1"/><rect x="0" y="8.6" width="2.6" height="3.1"/><rect x="0" y="12.9" width="2.6" height="3.1"/><rect x="3.6" y="0" width="12.4" height="3.1"/><rect x="3.6" y="4.3" width="12.4" height="3.1"/><rect x="3.6" y="8.6" width="12.4" height="3.1"/><rect x="3.6" y="12.9" width="12.4" height="3.1"/></svg>
<svg class="a" style="left:754.25px;top:295.15px;width:15.90px;height:12.40px;color:#f2f2f2;fill:#f2f2f2;overflow:visible" viewBox="0.000 0.000 16.000 16.000" preserveAspectRatio="none"><rect x="0" y="0" width="16" height="3.1"/><rect x="5.6" y="4.3" width="10.4" height="3.1"/><rect x="5.6" y="8.6" width="10.4" height="3.1"/><rect x="0" y="12.9" width="16" height="3.1"/><path fill-rule="nonzero" d="M0 8.2L4.2 4.6V11.8Z"/></svg>
<svg class="a" style="left:798.15px;top:295.15px;width:16.20px;height:12.40px;color:#f2f2f2;fill:#f2f2f2;overflow:visible" viewBox="0.000 0.000 16.000 16.000" preserveAspectRatio="none"><rect x="0" y="0" width="16" height="3.1"/><rect x="5.6" y="4.3" width="10.4" height="3.1"/><rect x="5.6" y="8.6" width="10.4" height="3.1"/><rect x="0" y="12.9" width="16" height="3.1"/><path fill-rule="nonzero" d="M4.2 8.2L0 4.6V11.8Z"/></svg>
<svg class="a" style="left:841.25px;top:296.35px;width:15.80px;height:11.60px;color:#f2f2f2;fill:#f2f2f2;overflow:visible" viewBox="0.000 0.000 16.000 16.000" preserveAspectRatio="none"><path fill-rule="nonzero" d="M1.6 0H9.8Q11.4 0 11.4 1.6V14.4Q11.4 16 9.8 16H1.6Q0 16 0 14.4V1.6Q0 0 1.6 0Z"/><path fill-rule="nonzero" d="M11 8L16 3V13Z"/></svg>
<svg class="a" style="left:884.25px;top:295.15px;width:17.20px;height:13.80px;color:#f2f2f2;fill:#f2f2f2;overflow:visible" viewBox="0.000 0.000 16.000 16.000" preserveAspectRatio="none"><rect x="0.8" y="0.8" width="14.4" height="14.4" rx="1" fill="none" stroke="currentColor" stroke-width="1.6"/><circle cx="4.4" cy="4.6" r="1.6"/><path fill-rule="nonzero" d="M2.6 13.2V11L5 8.6L6.6 10.2L10.6 6.2L13.4 9V13.2Z"/></svg>
<svg class="a" style="left:930.0px;top:294.0px;width:13.0px;height:14.0px" viewBox="0 0 13.0 14.0"><rect x="0.55" y="0.55" width="11.9" height="12.9" fill="none" stroke="#f2f2f2" stroke-width="1.1"/><path d="M5.40 2.20L3.00 2.20L3.00 6.20M3.00 4.20L5.00 4.20M7.20 2.20L9.60 2.20L9.60 6.20L7.20 6.20L7.20 2.20M3.00 8.20L5.40 8.20L5.40 12.20L3.00 12.20M3.00 10.20L5.40 10.20M9.60 8.20L7.20 8.20L7.20 12.20M7.20 10.20L9.20 10.20" fill="none" stroke="#d0d0d0" stroke-width="1"/></svg>
<svg class="a" style="left:279.85px;top:337.85px;width:12.10px;height:12.10px;color:#f2f2f2;fill:#f2f2f2;overflow:visible" viewBox="0.000 -0.050 16.050 16.050" preserveAspectRatio="none"><path fill-rule="nonzero" d="M0 16L0.8 12L11.6 1.2L14.8 4.4L4 15.2Z"/><path fill-rule="nonzero" d="M12.6 0.2Q13.4 -0.4 14.2 0.4L15.6 1.8Q16.4 2.6 15.8 3.4L15.2 4L12 0.8Z"/><path fill-rule="nonzero" d="M1.2 14.8L1.6 12.8L3.2 14.4Z"/><path fill="none" stroke="currentColor" stroke-width="0.8" stroke-linecap="butt" stroke-linejoin="miter" d="M1.6 12.6L3.4 14.4"/></svg>
<svg class="a" style="left:324.65px;top:336.15px;width:9.80px;height:13.80px;color:#f2f2f2;fill:#f2f2f2;overflow:visible" viewBox="0.000 0.000 16.000 15.950" preserveAspectRatio="none"><path fill-rule="evenodd" d="M8 16C2.4 8.6 0 7.4 0 4.9C0 2.2 3.6 0 8 0C12.4 0 16 2.2 16 4.9C16 7.4 13.6 8.6 8 16Z M8 2.4A2.4 2.3 0 1 0 8.01 2.4Z"/><ellipse cx="8" cy="4.9" rx="2.9" ry="2.3" fill="#606060"/></svg>
<svg class="a" style="left:365.95px;top:336.15px;width:13.80px;height:13.80px;color:#f2f2f2;fill:#f2f2f2;overflow:visible" viewBox="0.000 0.000 16.000 16.000" preserveAspectRatio="none"><circle cx="8" cy="8" r="6.8" fill="none" stroke="currentColor" stroke-width="2.4"/><path fill-rule="nonzero" d="M8 1V15A7 7 0 0 0 8 1Z"/></svg>
<svg class="a" style="left:410.75px;top:336.15px;width:9.80px;height:12.80px;color:#f2f2f2;fill:#f2f2f2;overflow:visible" viewBox="0.000 0.050 16.000 15.950" preserveAspectRatio="none"><path fill-rule="nonzero" d="M8 0C6.4 4.6 0 7.6 0 10.6C0 13.6 3.6 16 8 16C12.4 16 16 13.6 16 10.6C16 7.6 9.6 4.6 8 0Z"/><ellipse cx="5" cy="11.6" rx="1.3" ry="1.8" fill="#606060"/></svg>
<svg class="a" style="left:450.75px;top:336.25px;width:16.40px;height:12.80px;color:#f2f2f2;fill:#f2f2f2;overflow:visible" viewBox="0.000 0.250 16.200 15.750" preserveAspectRatio="none"><path fill="none" stroke="currentColor" stroke-width="1.6" stroke-linecap="butt" stroke-linejoin="miter" d="M9.4 1.6H2Q0.8 1.6 0.8 2.8V14Q0.8 15.2 2 15.2H12.6Q13.8 15.2 13.8 14V9.2"/><path fill-rule="nonzero" d="M5.4 11.6L5.9 9.1L13.1 1.9L15.1 3.9L7.9 11.1Z"/><path fill-rule="nonzero" d="M13.9 1.1L14.5 0.5Q15 0 15.5 0.5L16 1Q16.4 1.5 16 2L15.5 2.5Z"/></svg>
<svg class="a" style="left:495.95px;top:335.05px;width:15.40px;height:14.00px;color:#f2f2f2;fill:#f2f2f2;overflow:visible" viewBox="0.000 0.000 15.950 16.000" preserveAspectRatio="none"><path fill="none" stroke="currentColor" stroke-width="1.6" stroke-linecap="butt" stroke-linejoin="miter" d="M6.6 2.6H2Q0.8 2.6 0.8 3.8V14Q0.8 15.2 2 15.2H11.6Q12.8 15.2 12.8 14V11.4"/><path fill-rule="nonzero" d="M11.4 0L16 4.4L11.4 8.8V6.4C7.6 6.2 5.8 7.6 4.6 11C4.6 5.6 7.4 2.8 11.4 2.6Z"/></svg>
<svg class="a" style="left:539.05px;top:336.25px;width:14.70px;height:12.80px;color:#f2f2f2;fill:#f2f2f2;overflow:visible" viewBox="0.000 0.800 16.000 15.200" preserveAspectRatio="none"><path fill="none" stroke="currentColor" stroke-width="1.6" stroke-linecap="butt" stroke-linejoin="miter" d="M11.6 1.6H2Q0.8 1.6 0.8 2.8V14Q0.8 15.2 2 15.2H12.6Q13.8 15.2 13.8 14V10"/><path fill-rule="nonzero" d="M3.4 6.8L5.4 4.8L7.8 7.2L14 1L16 3L7.8 11.2Z"/></svg>
<svg class="a" style="left:581.15px;top:335.05px;width:15.90px;height:15.40px;color:#f2f2f2;fill:#f2f2f2;overflow:visible" viewBox="0.000 0.000 16.000 16.000" preserveAspectRatio="none"><path fill-rule="nonzero" d="M8 0L11.2 3.2H9.2V6.8H12.8V4.8L16 8L12.8 11.2V9.2H9.2V12.8H11.2L8 16L4.8 12.8H6.8V9.2H3.2V11.2L0 8L3.2 4.8V6.8H6.8V3.2H4.8Z"/></svg>
<svg class="a" style="left:627.75px;top:336.15px;width:10.20px;height:13.80px;color:#f2f2f2;fill:#f2f2f2;overflow:visible" viewBox="0.000 0.000 16.000 16.000" preserveAspectRatio="none"><rect x="0" y="0" width="3.4" height="16"/><path fill-rule="nonzero" d="M3 8L16 0V16Z"/></svg>
<svg class="a" style="left:667.65px;top:336.15px;width:16.80px;height:13.80px;color:#f2f2f2;fill:#f2f2f2;overflow:visible" viewBox="0.000 0.000 16.000 16.000" preserveAspectRatio="none"><rect x="0" y="0" width="2.4" height="16"/><path fill-rule="nonzero" d="M2 8L9 0.4V15.6Z"/><path fill-rule="nonzero" d="M9 8L16 0.4V15.6Z"/></svg>
<svg class="a" style="left:712.95px;top:336.15px;width:14.20px;height:13.80px;color:#f2f2f2;fill:#f2f2f2;overflow:visible" viewBox="0.000 0.000 16.000 16.000" preserveAspectRatio="none"><path fill-rule="nonzero" d="M0 8L8 0V16Z"/><path fill-rule="nonzero" d="M8 8L16 0V16Z"/></svg>
<svg class="a" style="left:756.05px;top:336.15px;width:12.70px;height:13.80px;color:#f2f2f2;fill:#f2f2f2;overflow:visible" viewBox="0.000 0.000 15.950 16.000" preserveAspectRatio="none"><path fill-rule="nonzero" d="M0 0L16 8L0 16Z"/></svg>
<svg class="a" style="left:799.05px;top:336.15px;width:14.10px;height:13.80px;color:#f2f2f2;fill:#f2f2f2;overflow:visible" viewBox="0.000 0.000 16.000 16.000" preserveAspectRatio="none"><rect x="0" y="0" width="6.6" height="16"/><rect x="9.4" y="0" width="6.6" height="16"/></svg>
<svg class="a" style="left:842.05px;top:336.15px;width:13.60px;height:13.80px;color:#f2f2f2;fill:#f2f2f2;overflow:visible" viewBox="0.000 0.000 16.000 16.000" preserveAspectRatio="none"><rect x="0" y="0" width="16" height="16"/></svg>
<svg class="a" style="left:884.75px;top:336.15px;width:14.00px;height:13.80px;color:#f2f2f2;fill:#f2f2f2;overflow:visible" viewBox="0.000 0.000 16.000 16.000" preserveAspectRatio="none"><path fill-rule="nonzero" d="M0 0L8 8L0 16Z"/><path fill-rule="nonzero" d="M8 0L16 8L8 16Z"/></svg>
<svg class="a" style="left:930.0px;top:335.0px;width:13.0px;height:14.0px" viewBox="0 0 13.0 14.0"><rect x="0.55" y="0.55" width="11.9" height="12.9" fill="none" stroke="#f2f2f2" stroke-width="1.1"/><path d="M5.40 2.20L3.00 2.20L3.00 6.20M3.00 4.20L5.00 4.20M7.20 2.20L9.60 2.20L9.60 6.20L7.20 6.20L7.20 2.20M3.00 8.20L3.00 10.20L5.40 10.20M5.40 8.20L5.40 12.20M9.60 8.20L7.20 8.20L7.20 12.20M7.20 10.20L9.20 10.20" fill="none" stroke="#d0d0d0" stroke-width="1"/></svg>
<svg class="a" style="left:279.05px;top:378.85px;width:14.60px;height:12.10px;color:#f2f2f2;fill:#f2f2f2;overflow:visible" viewBox="0.000 0.000 16.000 16.000" preserveAspectRatio="none"><path fill-rule="nonzero" d="M0 0.4L7 8L0 15.6Z"/><path fill-rule="nonzero" d="M7 0.4L14 8L7 15.6Z"/><rect x="13.6" y="0" width="2.4" height="16"/></svg>
<svg class="a" style="left:325.15px;top:377.15px;width:9.80px;height:13.80px;color:#f2f2f2;fill:#f2f2f2;overflow:visible" viewBox="0.000 0.000 16.000 16.000" preserveAspectRatio="none"><path fill-rule="nonzero" d="M0 0L13 8L0 16Z"/><rect x="12.6" y="0" width="3.4" height="16"/></svg>
<svg class="a" style="left:365.95px;top:378.35px;width:13.80px;height:11.60px;color:#f2f2f2;fill:#f2f2f2;overflow:visible" viewBox="0.000 0.050 16.000 15.950" preserveAspectRatio="none"><path fill-rule="nonzero" d="M8 0L16 9.4H0Z"/><rect x="0" y="12" width="16" height="4"/></svg>
<svg class="a" style="left:411.25px;top:376.65px;width:9.80px;height:14.30px;color:#f2f2f2;fill:#f2f2f2;overflow:visible" viewBox="0.050 0.000 15.900 16.000" preserveAspectRatio="none"><path fill-rule="nonzero" d="M0 8L12.6 0L16 2.2L6.6 8L16 13.8L12.6 16Z"/></svg>
<svg class="a" style="left:454.65px;top:376.75px;width:9.40px;height:13.80px;color:#f2f2f2;fill:#f2f2f2;overflow:visible" viewBox="0.050 0.000 15.900 16.000" preserveAspectRatio="none"><path fill-rule="nonzero" d="M16 8L3.4 0L0 2.2L9.4 8L0 13.8L3.4 16Z"/></svg>
<svg class="a" style="left:495.95px;top:377.25px;width:14.20px;height:13.90px;color:#f2f2f2;fill:#f2f2f2;overflow:visible" viewBox="0.000 0.000 16.000 16.000" preserveAspectRatio="none"><circle cx="8" cy="8" r="8"/><path fill="#606060" fill-rule="nonzero" d="M6.9 3.6H9.1V6.9H12.4V9.1H9.1V12.4H6.9V9.1H3.6V6.9H6.9Z"/></svg>
<svg class="a" style="left:539.05px;top:377.25px;width:13.90px;height:13.90px;color:#f2f2f2;fill:#f2f2f2;overflow:visible" viewBox="0.000 0.000 16.000 16.000" preserveAspectRatio="none"><circle cx="8" cy="8" r="8"/><rect x="3.6" y="6.9" width="8.8" height="2.2" fill="#606060"/></svg>
<svg class="a" style="left:582.85px;top:377.25px;width:13.90px;height:13.90px;color:#f2f2f2;fill:#f2f2f2;overflow:visible" viewBox="0.000 0.000 16.000 16.000" preserveAspectRatio="none"><circle cx="8" cy="8" r="8"/><path fill="#606060" fill-rule="nonzero" d="M5 6.4L6.4 5L8 6.6L9.6 5L11 6.4L9.4 8L11 9.6L9.6 11L8 9.4L6.4 11L5 9.6L6.6 8Z"/></svg>
<svg class="a" style="left:626.05px;top:377.15px;width:14.10px;height:13.80px;color:#f2f2f2;fill:#f2f2f2;overflow:visible" viewBox="0.000 0.000 16.000 16.000" preserveAspectRatio="none"><circle cx="8" cy="8" r="8"/><path fill="#606060" fill-rule="nonzero" d="M3.8 8.2L5.4 6.6L7 8.2L10.8 4.4L12.4 6L7 11.4Z"/></svg>
<svg class="a" style="left:669.05px;top:377.15px;width:13.60px;height:13.80px;color:#f2f2f2;fill:#f2f2f2;overflow:visible" viewBox="0.000 0.000 16.000 16.000" preserveAspectRatio="none"><circle cx="8" cy="8" r="8"/><text x="8" y="12.6" font-family="Liberation Sans" font-size="12" font-weight="bold" font-style="normal" text-anchor="middle" fill="#606060">?</text></svg>
<svg class="a" style="left:711.75px;top:377.15px;width:14.00px;height:13.80px;color:#f2f2f2;fill:#f2f2f2;overflow:visible" viewBox="0.000 0.000 16.000 16.000" preserveAspectRatio="none"><circle cx="8" cy="8" r="8"/><rect x="6.9" y="6.6" width="2.2" height="5.4" fill="#606060"/><rect x="5.6" y="10.8" width="4.8" height="1.4" fill="#606060"/><rect x="5.8" y="6.4" width="3.2" height="1.4" fill="#606060"/><circle cx="8" cy="4.4" r="1.3" fill="#606060"/></svg>
<svg class="a" style="left:756.05px;top:376.65px;width:13.70px;height:14.60px;color:#f2f2f2;fill:#f2f2f2;overflow:visible" viewBox="0.000 0.000 16.000 16.000" preserveAspectRatio="none"><circle cx="8" cy="8" r="5.3" fill="none" stroke="currentColor" stroke-width="1.7"/><path fill="none" stroke="currentColor" stroke-width="2.6" stroke-linecap="butt" stroke-linejoin="miter" d="M8 0V5.4M8 10.6V16M0 8H5.4M10.6 8H16"/></svg>
<svg class="a" style="left:799.05px;top:377.15px;width:14.10px;height:13.80px;color:#f2f2f2;fill:#f2f2f2;overflow:visible" viewBox="0.000 0.000 16.000 16.000" preserveAspectRatio="none"><circle cx="8" cy="8" r="6.8" fill="none" stroke="currentColor" stroke-width="2.4"/><path fill-rule="nonzero" d="M4.6 6.4L6.4 4.6L8 6.2L9.6 4.6L11.4 6.4L9.8 8L11.4 9.6L9.6 11.4L8 9.8L6.4 11.4L4.6 9.6L6.2 8Z"/></svg>
<svg class="a" style="left:842.05px;top:377.15px;width:13.60px;height:13.80px;color:#f2f2f2;fill:#f2f2f2;overflow:visible" viewBox="0.000 0.000 16.000 16.000" preserveAspectRatio="none"><circle cx="8" cy="8" r="6.8" fill="none" stroke="currentColor" stroke-width="2.4"/><path fill-rule="nonzero" d="M3.8 8L5.4 6.4L7 8L10.6 4.4L12.2 6L7 11.2Z"/></svg>
<svg class="a" style="left:885.95px;top:377.15px;width:14.20px;height:13.80px;color:#f2f2f2;fill:#f2f2f2;overflow:visible" viewBox="-0.100 -0.100 16.200 16.200" preserveAspectRatio="none"><circle cx="8" cy="8" r="7" fill="none" stroke="currentColor" stroke-width="2.2"/><path fill="none" stroke="currentColor" stroke-width="2.2" stroke-linecap="butt" stroke-linejoin="miter" d="M3.2 12.8L12.8 3.2"/></svg>
<svg class="a" style="left:930.0px;top:376.0px;width:13.0px;height:14.0px" viewBox="0 0 13.0 14.0"><rect x="0.55" y="0.55" width="11.9" height="12.9" fill="none" stroke="#f2f2f2" stroke-width="1.1"/><path d="M5.40 2.20L3.00 2.20L3.00 6.20M3.00 4.20L5.00 4.20M7.20 2.20L9.60 2.20L9.60 6.20L7.20 6.20L7.20 2.20M5.40 8.20L3.00 8.20L3.00 10.20L5.40 10.20L5.40 12.20L3.00 12.20M9.60 8.20L7.20 8.20L7.20 12.20M7.20 10.20L9.20 10.20" fill="none" stroke="#d0d0d0" stroke-width="1"/></svg>
<svg class="a" style="left:279.85px;top:419.85px;width:12.40px;height:12.10px;color:#f2f2f2;fill:#f2f2f2;overflow:visible" viewBox="0.000 1.000 16.000 14.000" preserveAspectRatio="none"><path fill-rule="nonzero" d="M0 8L7 1L9.6 3.6L6.8 6.4H16V9.6H6.8L9.6 12.4L7 15Z"/></svg>
<svg class="a" style="left:322.95px;top:418.65px;width:13.80px;height:14.00px;color:#f2f2f2;fill:#f2f2f2;overflow:visible" viewBox="0.000 1.000 16.000 14.000" preserveAspectRatio="none"><path fill-rule="nonzero" d="M16 8L9 1L6.4 3.6L9.2 6.4H0V9.6H9.2L6.4 12.4L9 15Z"/></svg>
<svg class="a" style="left:365.95px;top:418.65px;width:15.00px;height:13.30px;color:#f2f2f2;fill:#f2f2f2;overflow:visible" viewBox="1.000 0.000 14.000 16.000" preserveAspectRatio="none"><path fill-rule="nonzero" d="M8 0L15 7L12.4 9.6L9.6 6.8V16H6.4V6.8L3.6 9.6L1 7Z"/></svg>
<svg class="a" style="left:409.05px;top:418.15px;width:14.40px;height:13.80px;color:#f2f2f2;fill:#f2f2f2;overflow:visible" viewBox="1.000 0.000 14.000 16.000" preserveAspectRatio="none"><path fill-rule="nonzero" d="M8 16L15 9L12.4 6.4L9.6 9.2V0H6.4V9.2L3.6 6.4L1 9Z"/></svg>
<svg class="a" style="left:450.75px;top:417.75px;width:16.40px;height:14.40px;color:#f2f2f2;fill:#f2f2f2;overflow:visible" viewBox="0.500 0.000 15.450 15.900" preserveAspectRatio="none"><path fill-rule="nonzero" d="M10.4 0L16 5.4L10.4 10.8V7.6C5.6 7.4 2.2 9.4 0.8 16C-0.6 8 3 3.6 10.4 3.4Z"/></svg>
<svg class="a" style="left:495.95px;top:417.75px;width:14.20px;height:14.40px;color:#f2f2f2;fill:#f2f2f2;overflow:visible" viewBox="0.000 0.000 16.000 16.000" preserveAspectRatio="none"><path fill-rule="nonzero" d="M9.6 0H16V6.4L13.8 4.2L10.6 7.4L8.6 5.4L11.8 2.2Z"/><path fill-rule="nonzero" d="M6.4 16H0V9.6L2.2 11.8L5.4 8.6L7.4 10.6L4.2 13.8Z"/></svg>
<svg class="a" style="left:539.05px;top:418.25px;width:13.90px;height:13.90px;color:#f2f2f2;fill:#f2f2f2;overflow:visible" viewBox="-0.050 -0.050 16.100 16.100" preserveAspectRatio="none"><path fill-rule="nonzero" d="M7.3 2.1V7.7H14.3Z"/><path fill="none" stroke="currentColor" stroke-width="2.4" stroke-linecap="butt" stroke-linejoin="miter" d="M10.4 5.6L15.2 0.8"/><path fill-rule="nonzero" d="M1.7 7.9H8.4V14.3Z"/><path fill="none" stroke="currentColor" stroke-width="2.4" stroke-linecap="butt" stroke-linejoin="miter" d="M5.6 10.4L0.8 15.2"/></svg>
<svg class="a" style="left:582.85px;top:418.25px;width:12.80px;height:12.80px;color:#f2f2f2;fill:#f2f2f2;overflow:visible" viewBox="0.000 0.000 16.000 16.000" preserveAspectRatio="none"><path fill-rule="nonzero" d="M6.4 0H9.6V6.4H16V9.6H9.6V16H6.4V9.6H0V6.4H6.4Z"/></svg>
<svg class="a" style="left:626.85px;top:422.45px;width:12.80px;height:4.30px;color:#f2f2f2;fill:#f2f2f2;overflow:visible" viewBox="0.000 0.000 16.000 16.000" preserveAspectRatio="none"><rect x="0" y="0" width="16" height="16" rx="1"/></svg>
<svg class="a" style="left:669.55px;top:418.15px;width:13.10px;height:13.80px;color:#f2f2f2;fill:#f2f2f2;overflow:visible" viewBox="0.600 0.400 14.800 15.200" preserveAspectRatio="none"><path fill="none" stroke="currentColor" stroke-width="3.2" stroke-linecap="butt" stroke-linejoin="miter" d="M8 0.4V15.6M1.4 4.2L14.6 11.8M1.4 11.8L14.6 4.2"/></svg>
<svg class="a" style="left:711.75px;top:418.15px;width:14.00px;height:13.80px;color:#f2f2f2;fill:#f2f2f2;overflow:visible" viewBox="0.000 0.000 16.000 16.000" preserveAspectRatio="none"><circle cx="8" cy="8" r="8"/><rect x="6.8" y="3.4" width="2.4" height="6.2" fill="#606060"/><rect x="6.8" y="10.6" width="2.4" height="2.2" fill="#606060"/></svg>
<svg class="a" style="left:756.05px;top:419.05px;width:14.10px;height:11.90px;color:#f2f2f2;fill:#f2f2f2;overflow:visible" viewBox="0.000 0.600 16.000 15.400" preserveAspectRatio="none"><path fill-rule="nonzero" d="M0 5.2H16V8.4H15V16H1V8.4H0Z"/><rect x="6.6" y="5.2" width="2.8" height="10.8" fill="#606060"/><path fill="none" stroke="currentColor" stroke-width="1.6" stroke-linecap="butt" stroke-linejoin="miter" d="M8 4.8C6 1 3.6 0.6 3.4 2.6C3.3 4.4 6.4 4.8 8 4.8C9.6 4.8 12.7 4.4 12.6 2.6C12.4 0.6 10 1 8 4.8"/><rect x="1" y="8.4" width="14" height="1" fill="#606060"/></svg>
<svg class="a" style="left:797.65px;top:417.65px;width:16.70px;height:13.30px;color:#f2f2f2;fill:#f2f2f2;overflow:visible" viewBox="0.000 -0.050 16.000 16.050" preserveAspectRatio="none"><path fill-rule="nonzero" d="M16 0C15.6 10.6 10 14 4.4 13C3.4 13 2.4 14.4 1.6 16L0 14.6C1 13.6 2 12.6 2.2 11.6C-0.6 4.6 8 -0.4 16 0Z"/><path fill="none" stroke="#606060" stroke-width="1.1" stroke-linecap="butt" stroke-linejoin="miter" d="M2.8 12.2C5.4 8.6 8.2 7 11.6 5.8"/></svg>
<svg class="a" style="left:842.95px;top:416.95px;width:12.70px;height:15.70px;color:#f2f2f2;fill:#f2f2f2;overflow:visible" viewBox="0.000 0.000 16.000 16.000" preserveAspectRatio="none"><path fill-rule="nonzero" d="M6.9 0C5 2.8 2.5 4.8 2.5 8.4C2.5 11 4.6 12.8 7.6 13.8C6.6 12 7.4 10.6 9.8 9.2C12.2 7.8 13.5 6.4 13.5 4.6C13.5 2.6 10.4 1.2 6.9 0Z"/><rect x="0" y="14.6" width="16" height="1.4"/></svg>
<svg class="a" style="left:884.25px;top:421.05px;width:16.20px;height:9.90px;color:#f2f2f2;fill:#f2f2f2;overflow:visible" viewBox="0.000 0.000 16.000 16.000" preserveAspectRatio="none"><path fill-rule="evenodd" d="M0 8C2.4 2.4 5.4 0 8 0C10.6 0 13.6 2.4 16 8C13.6 13.6 10.6 16 8 16C5.4 16 2.4 13.6 0 8Z M2 8C3.8 12.4 6 14 8 14C10 14 12.2 12.4 14 8C12.2 3.6 10 2 8 2C6 2 3.8 3.6 2 8Z"/><circle cx="8" cy="8" r="4.6"/><circle cx="6.6" cy="6.4" r="1.4" fill="#606060"/></svg>
<svg class="a" style="left:930.0px;top:417.0px;width:13.0px;height:14.0px" viewBox="0 0 13.0 14.0"><rect x="0.55" y="0.55" width="11.9" height="12.9" fill="none" stroke="#f2f2f2" stroke-width="1.1"/><path d="M5.40 2.20L3.00 2.20L3.00 6.20M3.00 4.20L5.00 4.20M7.20 2.20L9.60 2.20L9.60 6.20L7.20 6.20L7.20 2.20M5.40 8.20L3.00 8.20L3.00 12.20L5.40 12.20L5.40 10.20L3.00 10.20M9.60 8.20L7.20 8.20L7.20 12.20M7.20 10.20L9.20 10.20" fill="none" stroke="#d0d0d0" stroke-width="1"/></svg>
<svg class="a" style="left:279.05px;top:462.05px;width:14.60px;height:10.90px;color:#f2f2f2;fill:#f2f2f2;overflow:visible" viewBox="0.000 0.000 16.000 16.000" preserveAspectRatio="none"><path fill-rule="evenodd" d="M0 8C2.4 2.4 5.4 0 8 0C10.6 0 13.6 2.4 16 8C13.6 13.6 10.6 16 8 16C5.4 16 2.4 13.6 0 8Z M2.2 8C3.8 12.4 6 14 8 14C10 14 12.2 12.4 13.8 8C12.2 3.6 10 2 8 2C6 2 3.8 3.6 2.2 8Z"/><path fill-rule="nonzero" d="M8 3.6A4.4 4.4 0 0 0 5.4 11.6L9.6 3.9A4.4 4.4 0 0 0 8 3.6Z"/><path fill="none" stroke="currentColor" stroke-width="1.6" stroke-linecap="butt" stroke-linejoin="miter" d="M4.4 15.4L11.6 0.6"/></svg>
<svg class="a" style="left:320.65px;top:457.95px;width:16.40px;height:15.00px;color:#f2f2f2;fill:#f2f2f2;overflow:visible" viewBox="0.050 0.000 15.900 16.000" preserveAspectRatio="none"><path fill-rule="nonzero" d="M6.8 0.8Q8 -0.8 9.2 0.8L15.8 14Q16.4 16 14.4 16H1.6Q-0.4 16 0.2 14Z"/><rect x="7" y="5" width="2" height="5.6" fill="#606060"/><rect x="7" y="11.8" width="2" height="2" fill="#606060"/></svg>
<svg class="a" style="left:367.15px;top:459.15px;width:12.60px;height:12.80px;color:#f2f2f2;fill:#f2f2f2;overflow:visible" viewBox="0.000 0.050 15.900 15.950" preserveAspectRatio="none"><path fill-rule="nonzero" d="M14.6 0.2Q16.2 -0.4 15.8 1.4L12.2 5.6L13.8 14L12.2 15.6L8.8 9L5.6 12.4L6 15L4.8 16L3.2 12.8L0 11.2L1 10L3.6 10.4L7 7.2L0.4 3.8L2 2.2L10.4 3.8Z"/></svg>
<svg class="a" style="left:409.05px;top:457.95px;width:15.00px;height:15.70px;color:#f2f2f2;fill:#f2f2f2;overflow:visible" viewBox="0.000 0.000 16.000 16.000" preserveAspectRatio="none"><path fill-rule="evenodd" d="M0 2.6H16V16H0Z M1.4 6.2V14.6H14.6V6.2Z"/><rect x="2.6" y="7.4" width="2.4" height="1.8"/><rect x="6" y="7.4" width="2.4" height="1.8"/><rect x="9.4" y="7.4" width="2.4" height="1.8"/><rect x="2.6" y="10.2" width="2.4" height="1.8"/><rect x="6" y="10.2" width="2.4" height="1.8"/><rect x="9.4" y="10.2" width="2.4" height="1.8"/><rect x="12.2" y="7.4" width="1.6" height="1.8"/><rect x="12.2" y="10.2" width="1.6" height="1.8"/><rect x="2.6" y="12.8" width="2.4" height="1.4"/><rect x="6" y="12.8" width="2.4" height="1.4"/><rect x="9.4" y="12.8" width="2.4" height="1.4"/><rect x="12.2" y="12.8" width="1.6" height="1.4"/><rect x="3" y="0" width="2.6" height="4.4" rx="1.2"/><rect x="10.4" y="0" width="2.6" height="4.4" rx="1.2"/></svg>
<svg class="a" style="left:450.75px;top:458.75px;width:16.40px;height:14.40px;color:#f2f2f2;fill:#f2f2f2;overflow:visible" viewBox="0.000 0.800 16.000 14.400" preserveAspectRatio="none"><path fill="none" stroke="currentColor" stroke-width="2" stroke-linecap="butt" stroke-linejoin="miter" d="M0 4.4H3.4C7.6 4.4 7.4 11.6 11.6 11.6H12.8"/><path fill="none" stroke="currentColor" stroke-width="2" stroke-linecap="butt" stroke-linejoin="miter" d="M0 11.6H3.4C4.6 11.6 5.4 11 6 10.2M8.6 6C9.4 5 10.2 4.4 11.6 4.4H12.8"/><path fill-rule="nonzero" d="M12.4 0.8L16 4.4L12.4 8Z"/><path fill-rule="nonzero" d="M12.4 8L16 11.6L12.4 15.2Z"/></svg>
<svg class="a" style="left:494.55px;top:460.15px;width:16.80px;height:13.60px;color:#f2f2f2;fill:#f2f2f2;overflow:visible" viewBox="0.000 0.000 16.000 16.000" preserveAspectRatio="none"><path fill-rule="nonzero" d="M8 0C12.4 0 16 2.8 16 6.4C16 10 12.4 12.8 8 12.8C7.2 12.8 6.6 12.8 5.8 12.6C4.8 14.4 3 15.6 1.2 16C2.2 14.8 2.8 13.6 2.8 11.8C1 10.6 0 8.6 0 6.4C0 2.8 3.6 0 8 0Z"/></svg>
<svg class="a" style="left:539.05px;top:459.25px;width:13.90px;height:13.90px;color:#f2f2f2;fill:#f2f2f2;overflow:visible" viewBox="0.000 0.000 16.000 16.000" preserveAspectRatio="none"><path fill-rule="nonzero" d="M0 0H5.2V8.4A2.8 2.8 0 0 0 10.8 8.4V0H16V8.4A8 7.6 0 0 1 0 8.4Z"/><rect x="0" y="3.4" width="5.2" height="1.2" fill="#606060"/><rect x="10.8" y="3.4" width="5.2" height="1.2" fill="#606060"/></svg>
<svg class="a" style="left:581.65px;top:462.15px;width:14.50px;height:9.90px;color:#f2f2f2;fill:#f2f2f2;overflow:visible" viewBox="0.000 0.050 16.000 15.900" preserveAspectRatio="none"><path fill-rule="nonzero" d="M8 0L16 11.4L13.6 16L8 7.4L2.4 16L0 11.4Z"/></svg>
<svg class="a" style="left:626.05px;top:462.65px;width:14.10px;height:9.30px;color:#f2f2f2;fill:#f2f2f2;overflow:visible" viewBox="0.000 0.050 16.000 15.900" preserveAspectRatio="none"><path fill-rule="nonzero" d="M8 16L16 4.6L13.6 0L8 8.6L2.4 0L0 4.6Z"/></svg>
<svg class="a" style="left:667.05px;top:461.45px;width:17.40px;height:11.00px;color:#f2f2f2;fill:#f2f2f2;overflow:visible" viewBox="0.000 0.000 16.000 16.000" preserveAspectRatio="none"><path fill-rule="nonzero" d="M3.2 0L6.4 6.6H4.6V13H9V16H1.8V6.6H0Z"/><path fill-rule="nonzero" d="M5 0H13.6V9.4H16L12.4 16L9 9.4H10.8V3H5Z"/></svg>
<svg class="a" style="left:711.75px;top:460.05px;width:15.70px;height:12.90px;color:#f2f2f2;fill:#f2f2f2;overflow:visible" viewBox="0.000 0.000 16.000 16.000" preserveAspectRatio="none"><path fill-rule="evenodd" d="M0 0H2.8L3.6 2H16L14.6 9.4H5.4L5.8 10.8H14.6V12.2H4.6L2 1.4H0Z M5 3.4L5.6 8H13.4L14.2 3.4Z"/><circle cx="6.2" cy="14.4" r="1.6"/><circle cx="13" cy="14.4" r="1.6"/><rect x="4" y="3.6" width="10.8" height="4.4"/></svg>
<svg class="a" style="left:754.85px;top:459.15px;width:14.90px;height:12.80px;color:#f2f2f2;fill:#f2f2f2;overflow:visible" viewBox="0.000 0.000 16.000 16.000" preserveAspectRatio="none"><path fill-rule="nonzero" d="M1.2 0H6.2L7.6 2.2H14.8Q16 2.2 16 3.4V14.8Q16 16 14.8 16H1.2Q0 16 0 14.8V1.2Q0 0 1.2 0Z"/></svg>
<svg class="a" style="left:796.95px;top:458.65px;width:17.10px;height:13.30px;color:#f2f2f2;fill:#f2f2f2;overflow:visible" viewBox="0.000 0.000 16.000 16.000" preserveAspectRatio="none"><path fill-rule="nonzero" d="M1.2 0H5.6L7 2H12.4Q13.6 2 13.6 3.2V5.2H3.6L0 12.4V1.2Q0 0 1.2 0Z"/><path fill-rule="nonzero" d="M4 6.6H16L12.2 16H0Z"/></svg>
<svg class="a" style="left:845.55px;top:457.95px;width:7.70px;height:15.70px;color:#f2f2f2;fill:#f2f2f2;overflow:visible" viewBox="0.050 0.000 15.900 16.000" preserveAspectRatio="none"><path fill-rule="nonzero" d="M8 0L16 4.4H10.6V11.6H16L8 16L0 11.6H5.4V4.4H0Z"/></svg>
<svg class="a" style="left:883.75px;top:462.65px;width:16.40px;height:6.90px;color:#f2f2f2;fill:#f2f2f2;overflow:visible" viewBox="0.000 0.050 16.000 15.900" preserveAspectRatio="none"><path fill-rule="nonzero" d="M0 8L4.4 0V5.4H11.6V0L16 8L11.6 16V10.6H4.4V16Z"/></svg>
<svg class="a" style="left:930.0px;top:458.0px;width:13.0px;height:14.0px" viewBox="0 0 13.0 14.0"><rect x="0.55" y="0.55" width="11.9" height="12.9" fill="none" stroke="#f2f2f2" stroke-width="1.1"/><path d="M5.40 2.20L3.00 2.20L3.00 6.20M3.00 4.20L5.00 4.20M7.20 2.20L9.60 2.20L9.60 6.20L7.20 6.20L7.20 2.20M3.00 8.20L5.40 8.20L5.40 12.20M9.60 8.20L7.20 8.20L7.20 12.20M7.20 10.20L9.20 10.20" fill="none" stroke="#d0d0d0" stroke-width="1"/></svg>
<svg class="a" style="left:278.15px;top:501.85px;width:15.90px;height:12.10px;color:#f2f2f2;fill:#f2f2f2;overflow:visible" viewBox="0.000 0.000 16.000 16.000" preserveAspectRatio="none"><rect x="0" y="0" width="1.2" height="16"/><rect x="0" y="14.8" width="16" height="1.2"/><rect x="2.4" y="7.6" width="2" height="6.4"/><rect x="5.6" y="4.8" width="2" height="9.2"/><rect x="8.8" y="6.8" width="2" height="7.2"/><rect x="12" y="2" width="2" height="12"/></svg>
<svg class="a" style="left:322.95px;top:500.15px;width:13.80px;height:13.80px;color:#f2f2f2;fill:#f2f2f2;overflow:visible" viewBox="0.000 0.000 16.000 16.000" preserveAspectRatio="none"><rect x="0" y="0" width="16" height="16" rx="2.6"/><path fill="#606060" d="M13 4.6C12.6 4.8 12.1 4.9 11.7 5C12.2 4.7 12.5 4.3 12.7 3.8C12.3 4 11.8 4.2 11.3 4.3C10.9 3.9 10.3 3.6 9.7 3.6C8.5 3.6 7.5 4.6 7.5 5.8C7.5 6 7.5 6.1 7.6 6.3C5.7 6.2 4.1 5.3 3 4C2.8 4.3 2.7 4.7 2.7 5.1C2.7 5.9 3.1 6.5 3.7 6.9C3.3 6.9 3 6.8 2.7 6.6C2.7 7.7 3.5 8.6 4.5 8.8C4.3 8.9 4.1 8.9 3.9 8.9C3.8 8.9 3.6 8.9 3.5 8.9C3.8 9.8 4.6 10.4 5.6 10.4C4.8 11 3.9 11.4 2.8 11.4C2.6 11.4 2.5 11.4 2.3 11.4C3.3 12 4.4 12.4 5.7 12.4C9.7 12.4 11.9 9 11.9 6.1V5.8C12.3 5.5 12.7 5.1 13 4.6Z"/></svg>
<svg class="a" style="left:365.95px;top:500.15px;width:13.80px;height:13.80px;color:#f2f2f2;fill:#f2f2f2;overflow:visible" viewBox="0.000 0.000 16.000 16.000" preserveAspectRatio="none"><rect x="0" y="0" width="16" height="16" rx="2.6"/><path fill="#606060" fill-rule="nonzero" d="M8.6 16V10H7V7.6H8.6V6C8.6 4.2 9.6 3.2 11.2 3.2C11.9 3.2 12.5 3.3 12.7 3.3V5.4H11.6C10.8 5.4 10.7 5.8 10.7 6.3V7.6H12.6L12.3 10H10.7V16Z"/></svg>
<svg class="a" style="left:407.85px;top:500.15px;width:16.20px;height:13.80px;color:#f2f2f2;fill:#f2f2f2;overflow:visible" viewBox="0.000 0.000 16.000 16.000" preserveAspectRatio="none"><path fill-rule="evenodd" d="M1.2 1.4H14.8Q16 1.4 16 2.6V14.8Q16 16 14.8 16H1.2Q0 16 0 14.8V2.6Q0 1.4 1.2 1.4Z M1.4 6.2V14.6H14.6V6.2Z"/><rect x="1.4" y="3" width="4" height="2" fill="#606060"/><rect x="9" y="3" width="5.6" height="1.6" fill="#606060"/><circle cx="8" cy="10.2" r="3.2" fill="none" stroke="currentColor" stroke-width="1.6"/><rect x="0.4" y="0" width="4.6" height="1.4"/></svg>
<svg class="a" style="left:450.75px;top:501.45px;width:15.60px;height:13.00px;color:#f2f2f2;fill:#f2f2f2;overflow:visible" viewBox="-0.100 -0.100 16.100 15.100" preserveAspectRatio="none"><circle cx="4.8" cy="4.8" r="3.3" fill="none" stroke="currentColor" stroke-width="3.2"/><path fill-rule="nonzero" d="M7 6.2L8.8 5.2L16 12.4V14H14.6L13.6 13L14.4 12.2L13.4 11.2L12.6 12L11.8 11.2L12.6 10.4L11.6 9.4Z"/><path fill-rule="nonzero" d="M6.6 8.2L8.2 6.6L15 13.6L13.6 15Z"/></svg>
<svg class="a" style="left:494.05px;top:499.75px;width:17.30px;height:15.00px;color:#f2f2f2;fill:#f2f2f2;overflow:visible" viewBox="0.100 0.150 15.850 15.700" preserveAspectRatio="none"><path fill-rule="evenodd" d="M9.97 7.56L11.51 7.56L11.51 9.64L9.97 9.64L9.48 10.82L10.57 11.9L9.1 13.37L8.02 12.28L6.84 12.77L6.84 14.31L4.76 14.31L4.76 12.77L3.58 12.28L2.5 13.37L1.03 11.9L2.12 10.82L1.63 9.64L0.09 9.64L0.09 7.56L1.63 7.56L2.12 6.38L1.03 5.3L2.5 3.83L3.58 4.92L4.76 4.43L4.76 2.89L6.84 2.89L6.84 4.43L8.02 4.92L9.1 3.83L10.57 5.3L9.48 6.38ZM4 8.6A1.8 1.8 0 1 0 7.6 8.6A1.8 1.8 0 1 0 4 8.6Z"/><path fill-rule="evenodd" d="M15.22 2.58L15.94 2.6L15.94 3.8L15.22 3.82L14.98 4.41L15.48 4.92L14.62 5.78L14.11 5.28L13.52 5.52L13.5 6.24L12.3 6.24L12.28 5.52L11.69 5.28L11.18 5.78L10.32 4.92L10.82 4.41L10.58 3.82L9.86 3.8L9.86 2.6L10.58 2.58L10.82 1.99L10.32 1.48L11.18 0.62L11.69 1.12L12.28 0.88L12.3 0.16L13.5 0.16L13.52 0.88L14.11 1.12L14.62 0.62L15.48 1.48L14.98 1.99ZM12.1 3.2A0.8 0.8 0 1 0 13.7 3.2A0.8 0.8 0 1 0 12.1 3.2Z"/><path fill-rule="evenodd" d="M15.22 12.18L15.94 12.2L15.94 13.4L15.22 13.42L14.98 14.01L15.48 14.52L14.62 15.38L14.11 14.88L13.52 15.12L13.5 15.84L12.3 15.84L12.28 15.12L11.69 14.88L11.18 15.38L10.32 14.52L10.82 14.01L10.58 13.42L9.86 13.4L9.86 12.2L10.58 12.18L10.82 11.59L10.32 11.08L11.18 10.22L11.69 10.72L12.28 10.48L12.3 9.76L13.5 9.76L13.52 10.48L14.11 10.72L14.62 10.22L15.48 11.08L14.98 11.59ZM12.1 12.8A0.8 0.8 0 1 0 13.7 12.8A0.8 0.8 0 1 0 12.1 12.8Z"/></svg>
<svg class="a" style="left:537.85px;top:501.45px;width:16.30px;height:12.70px;color:#f2f2f2;fill:#f2f2f2;overflow:visible" viewBox="0.000 0.000 16.000 14.400" preserveAspectRatio="none"><path fill-rule="nonzero" d="M6.4 0C10 0 12.8 2.2 12.8 5C12.8 7.8 10 10 6.4 10C5.8 10 5.4 10 4.8 9.8C3.8 10.8 2.4 11.4 0.8 11.6C1.6 10.8 2 10 2.2 9C0.8 8.2 0 6.6 0 5C0 2.2 2.8 0 6.4 0Z"/><path fill-rule="nonzero" d="M13.6 4.2C15 5 16 6.4 16 8C16 9.6 15.2 11 13.8 11.8C14 12.8 14.4 13.6 15.2 14.4C13.6 14.2 12.2 13.6 11.2 12.6C10.6 12.8 10.2 12.8 9.6 12.8C8 12.8 6.6 12.4 5.6 11.6C10.2 11.8 14.2 8.8 13.6 4.2Z"/></svg>
<svg class="a" style="left:582.85px;top:499.05px;width:13.90px;height:15.10px;color:#f2f2f2;fill:#f2f2f2;overflow:visible" viewBox="0.000 -0.150 16.200 16.300" preserveAspectRatio="none"><path fill="none" stroke="currentColor" stroke-width="1.9" stroke-linecap="butt" stroke-linejoin="round" d="M4.4 7.2L7.6 3.4C8.4 2.4 8.2 0.8 9 0.8C10.6 0.8 11 2.6 10.2 5.8H14C15 5.8 15.4 6.6 15.2 7.2C15.4 8 15 8.6 14.6 8.8C15 9.6 14.6 10.4 14 10.6C14.2 11.6 13.8 12.2 13 12.4C13.2 13.8 12.6 15.2 11 15.2H7.8C6.2 15.2 5.6 14.4 4.4 14.4"/><rect x="0" y="6.6" width="3.8" height="9.4"/></svg>
<svg class="a" style="left:626.05px;top:500.15px;width:14.10px;height:14.50px;color:#f2f2f2;fill:#f2f2f2;overflow:visible" viewBox="0.000 -0.150 16.200 16.300" preserveAspectRatio="none"><path fill="none" stroke="currentColor" stroke-width="1.9" stroke-linecap="butt" stroke-linejoin="round" d="M4.4 8.8L7.6 12.6C8.4 13.6 8.2 15.2 9 15.2C10.6 15.2 11 13.4 10.2 10.2H14C15 10.2 15.4 9.4 15.2 8.8C15.4 8 15 7.4 14.6 7.2C15 6.4 14.6 5.6 14 5.4C14.2 4.4 13.8 3.8 13 3.6C13.2 2.2 12.6 0.8 11 0.8H7.8C6.2 0.8 5.6 1.6 4.4 1.6"/><rect x="0" y="0" width="3.8" height="9.4"/></svg>
<svg class="a" style="left:671.65px;top:499.65px;width:8.60px;height:14.30px;color:#f2f2f2;fill:#f2f2f2;overflow:visible" viewBox="0.050 0.000 15.950 16.000" preserveAspectRatio="none"><path fill-rule="nonzero" d="M16 0V12.6L5.4 16L8.2 10.2L0 5.8L10.4 5.4Z"/></svg>
<svg class="a" style="left:710.75px;top:500.65px;width:16.40px;height:13.30px;color:#f2f2f2;fill:#f2f2f2;overflow:visible" viewBox="0.150 0.550 15.700 15.050" preserveAspectRatio="none"><path fill="none" stroke="currentColor" stroke-width="1.6" stroke-linecap="butt" stroke-linejoin="round" d="M8 14.8L2 9C0.6 7.6 0.6 3.8 2.2 2.4C4 0.6 6.8 1.2 8 3.4C9.2 1.2 12 0.6 13.8 2.4C15.4 3.8 15.4 7.6 14 9Z"/></svg>
<svg class="a" style="left:754.85px;top:501.35px;width:14.40px;height:12.10px;color:#f2f2f2;fill:#f2f2f2;overflow:visible" viewBox="0.000 0.000 16.000 16.000" preserveAspectRatio="none"><path fill="none" stroke="currentColor" stroke-width="2" stroke-linecap="butt" stroke-linejoin="miter" d="M6.4 1H2.6Q1 1 1 2.6V13.4Q1 15 2.6 15H6.4"/><path fill-rule="nonzero" d="M5 5.8H10V1.8L16 8L10 14.2V10.2H5Z"/></svg>
<svg class="a" style="left:799.05px;top:500.15px;width:14.10px;height:13.80px;color:#f2f2f2;fill:#f2f2f2;overflow:visible" viewBox="0.000 0.000 16.000 16.000" preserveAspectRatio="none"><rect x="0" y="0" width="16" height="16" rx="2.6"/><rect x="2.8" y="6.4" width="2.2" height="6.8" fill="#606060"/><circle cx="3.9" cy="4.1" r="1.3" fill="#606060"/><path fill="#606060" fill-rule="nonzero" d="M6.6 6.4H8.6V7.4C9 6.6 9.8 6.2 10.8 6.2C12.4 6.2 13.4 7.2 13.4 9.2V13.2H11.2V9.6C11.2 8.6 10.8 8.2 10.2 8.2C9.4 8.2 8.8 8.8 8.8 9.8V13.2H6.6Z"/></svg>
<svg class="a" style="left:843.75px;top:500.15px;width:11.20px;height:14.50px;color:#f2f2f2;fill:#f2f2f2;overflow:visible" viewBox="0.000 0.000 16.000 16.000" preserveAspectRatio="none"><path fill-rule="nonzero" d="M1.6 0H14.4V1.6H12.8L12.8 6.6C14.6 7.6 16 9.2 16 10.6H0C0 9.2 1.4 7.6 3.2 6.6V1.6H1.6Z"/><rect x="7" y="10.4" width="2" height="5.6"/><rect x="5.2" y="1.6" width="1.2" height="5.4" fill="#606060"/></svg>
<svg class="a" style="left:884.25px;top:498.95px;width:16.20px;height:14.00px;color:#f2f2f2;fill:#f2f2f2;overflow:visible" viewBox="0.000 0.000 16.000 16.000" preserveAspectRatio="none"><path fill="none" stroke="currentColor" stroke-width="1.6" stroke-linecap="butt" stroke-linejoin="miter" d="M6.6 3.4H2Q0.8 3.4 0.8 4.6V14Q0.8 15.2 2 15.2H11.4Q12.6 15.2 12.6 14V9.4"/><path fill-rule="nonzero" d="M9.4 0H16V6.6L13.8 4.4L8.4 9.8L6.2 7.6L11.6 2.2Z"/></svg>
<svg class="a" style="left:930.0px;top:499.0px;width:13.0px;height:14.0px" viewBox="0 0 13.0 14.0"><rect x="0.55" y="0.55" width="11.9" height="12.9" fill="none" stroke="#f2f2f2" stroke-width="1.1"/><path d="M5.40 2.20L3.00 2.20L3.00 6.20M3.00 4.20L5.00 4.20M7.20 2.20L9.60 2.20L9.60 6.20L7.20 6.20L7.20 2.20M3.00 8.20L5.40 8.20L5.40 12.20L3.00 12.20L3.00 8.20M3.00 10.20L5.40 10.20M9.60 8.20L7.20 8.20L7.20 12.20M7.20 10.20L9.20 10.20" fill="none" stroke="#d0d0d0" stroke-width="1"/></svg>
<svg class="a" style="left:279.85px;top:543.75px;width:12.80px;height:10.20px;color:#f2f2f2;fill:#f2f2f2;overflow:visible" viewBox="0.000 0.000 16.000 16.000" preserveAspectRatio="none"><path fill-rule="nonzero" d="M0 5.8H6V1.8L12 8L6 14.2V10.2H0Z"/><path fill="none" stroke="currentColor" stroke-width="2" stroke-linecap="butt" stroke-linejoin="miter" d="M9.6 1H13.4Q15 1 15 2.6V13.4Q15 15 13.4 15H9.6"/></svg>
<svg class="a" style="left:322.05px;top:541.15px;width:15.00px;height:13.80px;color:#f2f2f2;fill:#f2f2f2;overflow:visible" viewBox="0.100 0.000 15.800 16.000" preserveAspectRatio="none"><path fill-rule="nonzero" d="M3.4 0H12.6V6C12.6 8.6 10.6 10.2 9.2 10.6V12.6H11.4V14.4H12.6V16H3.4V14.4H4.6V12.6H6.8V10.6C5.4 10.2 3.4 8.6 3.4 6Z"/><path fill="none" stroke="currentColor" stroke-width="1.6" stroke-linecap="butt" stroke-linejoin="miter" d="M3.8 1.8H0.9V3.4C0.9 5.8 2.6 7 4.2 7.2M12.2 1.8H15.1V3.4C15.1 5.8 13.4 7 11.8 7.2"/></svg>
<svg class="a" style="left:365.95px;top:541.15px;width:13.80px;height:13.80px;color:#f2f2f2;fill:#f2f2f2;overflow:visible" viewBox="0.000 0.000 16.000 16.000" preserveAspectRatio="none"><rect x="0" y="0" width="16" height="16" rx="2.6"/><circle cx="8" cy="8" r="4.2" fill="none" stroke="#606060" stroke-width="1.8"/><rect x="6.6" y="11" width="2.8" height="3.2" fill="#606060"/></svg>
<svg class="a" style="left:409.05px;top:540.65px;width:15.00px;height:14.30px;color:#f2f2f2;fill:#f2f2f2;overflow:visible" viewBox="0.000 0.000 16.000 16.000" preserveAspectRatio="none"><path fill-rule="nonzero" d="M8 0L13.2 5.2H10V10.6H6V5.2H2.8Z"/><path fill-rule="nonzero" d="M0 9.6H4.8V11.8H11.2V9.6H16V16H0Z"/><rect x="11.2" y="13" width="1.2" height="1.2" fill="#606060"/><rect x="13.4" y="13" width="1.2" height="1.2" fill="#606060"/></svg>
<svg class="a" style="left:452.95px;top:541.25px;width:13.90px;height:13.90px;color:#f2f2f2;fill:#f2f2f2;overflow:visible" viewBox="-0.050 0.000 16.100 16.000" preserveAspectRatio="none"><path fill="none" stroke="currentColor" stroke-width="1.7" stroke-linecap="butt" stroke-linejoin="miter" d="M0.9 15.1C0.4 9 1.6 1.8 8.4 1C11 0.7 13.4 0.9 15.1 0.9C15.6 7 14.4 14.2 7.6 15C5 15.3 2.6 15.1 0.9 15.1Z"/></svg>
<svg class="a" style="left:496.25px;top:541.25px;width:13.90px;height:12.80px;color:#f2f2f2;fill:#f2f2f2;overflow:visible" viewBox="0.350 0.050 15.600 15.700" preserveAspectRatio="none"><path fill-rule="nonzero" d="M0.8 2.6L3 0.2Q3.6 -0.2 4 0.4L6 3.8Q6.2 4.4 5.8 4.8L4.4 6C4.8 8 7.8 11.2 10 11.6L11.2 10.2Q11.6 9.8 12.2 10L15.6 12Q16.2 12.4 15.8 13L13.4 15.2C12.4 16.2 9 16.2 5 12.4C0.2 8 -0.2 3.6 0.8 2.6Z"/></svg>
<svg class="a" style="left:539.55px;top:541.25px;width:12.80px;height:12.80px;color:#f2f2f2;fill:#f2f2f2;overflow:visible" viewBox="0.000 0.000 16.000 16.000" preserveAspectRatio="none"><rect x="0.8" y="0.8" width="14.4" height="14.4" rx="2.6" fill="none" stroke="currentColor" stroke-width="1.6"/></svg>
<svg class="a" style="left:583.75px;top:541.25px;width:11.90px;height:13.90px;color:#f2f2f2;fill:#f2f2f2;overflow:visible" viewBox="0.000 0.000 16.000 16.950" preserveAspectRatio="none"><path fill="none" stroke="currentColor" stroke-width="1.6" stroke-linecap="butt" stroke-linejoin="miter" d="M0.8 0.8H15.2V15.2L8 8.8L0.8 15.2Z"/></svg>
<svg class="a" style="left:626.05px;top:541.15px;width:14.10px;height:13.80px;color:#f2f2f2;fill:#f2f2f2;overflow:visible" viewBox="0.000 0.000 16.000 16.000" preserveAspectRatio="none"><rect x="0" y="0" width="16" height="16" rx="2.6"/><path fill="#606060" fill-rule="nonzero" d="M3.6 4.8L4.8 3.6Q5.1 3.4 5.3 3.7L6.3 5.4Q6.4 5.7 6.2 5.9L5.5 6.5C5.7 7.5 7.2 9.1 8.3 9.3L8.9 8.6Q9.1 8.4 9.4 8.5L11.1 9.5Q11.4 9.7 11.2 10L10 11.1C9.5 11.6 7.8 11.6 5.8 9.7C3.4 7.5 3.1 5.3 3.6 4.8Z"/></svg>
<svg class="a" style="left:669.55px;top:542.35px;width:14.20px;height:11.60px;color:#f2f2f2;fill:#f2f2f2;overflow:visible" viewBox="0.000 0.400 15.950 15.600" preserveAspectRatio="none"><path fill-rule="nonzero" d="M16 1.9C15.4 2.2 14.8 2.3 14.1 2.4C14.8 2 15.3 1.4 15.5 0.7C14.9 1.1 14.2 1.3 16 1.5C12.9 0.8 12 0.4 11.1 0.4C9.3 0.4 7.8 1.9 7.8 3.7C7.8 4 7.8 4.2 7.9 4.5C5.2 4.3 2.7 3 1.1 1C0.8 1.5 0.7 2.1 0.7 2.7C0.7 3.8 1.3 4.8 2.2 5.4C1.6 5.4 1.1 5.2 0.7 5V5C0.7 6.6 1.8 7.9 3.3 8.2C3 8.3 2.7 8.3 2.4 8.3C2.2 8.3 2 8.3 1.8 8.3C2.2 9.6 3.5 10.6 4.9 10.6C3.8 11.5 2.3 12 0.8 12C0.5 12 0.3 12 0 14.4C1.5 15.3 3.2 16 5 16C11.1 16 14.4 8.4 14.4 4V3.6C15 3.1 15.6 2.6 16 1.9Z"/></svg>
<svg class="a" style="left:714.65px;top:540.25px;width:8.10px;height:15.00px;color:#f2f2f2;fill:#f2f2f2;overflow:visible" viewBox="0.000 0.000 16.000 16.000" preserveAspectRatio="none"><path fill-rule="nonzero" d="M4.4 16V9.2H0V6.2H4.4V4.4C4.4 1.6 6.2 0 9.2 0C11.2 0 13.6 0.3 16 0.4V3.2H13.2C11.6 3.2 11.2 4 11.2 5V6.2H15.6L15 9.2H11.2V16Z"/></svg>
<svg class="a" style="left:756.05px;top:541.15px;width:13.70px;height:13.80px;color:#f2f2f2;fill:#f2f2f2;overflow:visible" viewBox="0.000 0.000 16.000 15.600" preserveAspectRatio="none"><path fill-rule="nonzero" d="M8 0A8 8 0 0 0 5.5 15.6C5.9 15.7 6 15.4 6 15.2V13.8C3.8 14.3 3.3 12.8 3.3 12.8C2.9 11.9 2.4 11.6 2.4 11.6C1.7 11.1 2.5 11.1 2.5 11.1C3.3 11.2 3.7 11.9 3.7 11.9C4.4 13.1 5.6 12.8 6 12.6C6.1 12.1 6.3 11.8 6.5 11.6C4.7 11.4 2.9 10.7 2.9 7.7C2.9 6.8 3.2 6.1 3.7 5.6C3.6 5.4 3.4 4.6 3.8 3.5C3.8 3.5 4.5 3.3 6 4.3C6.6 4.1 7.3 4 8 4C8.7 4 9.4 4.1 10 4.3C11.5 3.3 12.2 3.5 12.2 3.5C12.6 4.6 12.4 5.4 12.3 5.6C12.8 6.1 13.1 6.8 13.1 7.7C13.1 10.7 11.3 11.4 9.5 11.6C9.8 11.8 10 12.3 10 13V15.2C10 15.4 10.1 15.7 10.5 15.6A8 8 0 0 0 8 0Z"/><circle cx="8" cy="8.2" r="3.4" fill="#606060"/><path fill="#606060" fill-rule="nonzero" d="M6.6 10H9.4V16H6.6Z"/></svg>
<svg class="a" style="left:799.05px;top:541.15px;width:15.30px;height:12.80px;color:#f2f2f2;fill:#f2f2f2;overflow:visible" viewBox="0.000 0.100 16.300 15.900" preserveAspectRatio="none"><rect x="0" y="7.4" width="10.4" height="8.6" rx="0.8"/><path fill="none" stroke="currentColor" stroke-width="1.8" stroke-linecap="butt" stroke-linejoin="miter" d="M8.2 7.6V4.6A3.6 3.6 0 0 1 15.4 4.6V6.6"/></svg>
<svg class="a" style="left:840.05px;top:541.15px;width:17.40px;height:13.80px;color:#f2f2f2;fill:#f2f2f2;overflow:visible" viewBox="0.000 0.000 16.000 16.000" preserveAspectRatio="none"><path fill-rule="evenodd" d="M1.4 0H14.6Q16 0 16 1.4V14.6Q16 16 14.6 16H1.4Q0 16 0 14.6V1.4Q0 0 1.4 0Z M1.4 7V14.6H14.6V7Z M1.4 1.4V3.4H14.6V1.4Z"/><rect x="2.4" y="11" width="2.4" height="1"/><rect x="5.4" y="11" width="2.4" height="1"/></svg>
<svg class="a" style="left:885.95px;top:541.15px;width:12.80px;height:12.80px;color:#f2f2f2;fill:#f2f2f2;overflow:visible" viewBox="0.000 0.100 15.900 15.900" preserveAspectRatio="none"><circle cx="2.3" cy="13.7" r="2.3"/><path fill="none" stroke="currentColor" stroke-width="2.6" stroke-linecap="butt" stroke-linejoin="miter" d="M1 7A8 8 0 0 1 9 15"/><path fill="none" stroke="currentColor" stroke-width="2.6" stroke-linecap="butt" stroke-linejoin="miter" d="M1 1.4A13.6 13.6 0 0 1 14.6 15"/></svg>
<svg class="a" style="left:930.0px;top:540.0px;width:13.0px;height:14.0px" viewBox="0 0 13.0 14.0"><rect x="0.55" y="0.55" width="11.9" height="12.9" fill="none" stroke="#f2f2f2" stroke-width="1.1"/><path d="M5.40 2.20L3.00 2.20L3.00 6.20M3.00 4.20L5.00 4.20M7.20 2.20L9.60 2.20L9.60 6.20L7.20 6.20L7.20 2.20M5.40 10.20L3.00 10.20L3.00 8.20L5.40 8.20L5.40 12.20L3.00 12.20M9.60 8.20L7.20 8.20L7.20 12.20M7.20 10.20L9.20 10.20" fill="none" stroke="#d0d0d0" stroke-width="1"/></svg>
<svg class="a" style="left:161.00px;top:187.30px;width:14.00px;height:14.00px;color:#606060;fill:#606060;overflow:visible" viewBox="0.000 0.000 16.000 16.000" preserveAspectRatio="none"><path fill-rule="nonzero" d="M4.6 2.6L16 0V12.4H13.8V4.2L6.8 5.8V14H4.6Z"/><ellipse cx="3.3" cy="14" rx="3.3" ry="2"/><ellipse cx="12.6" cy="12.2" rx="3.4" ry="2"/></svg>
<svg class="a" style="left:211.20px;top:187.30px;width:14.00px;height:14.00px;color:#606060;fill:#606060;overflow:visible" viewBox="0.000 0.000 16.000 16.000" preserveAspectRatio="none"><path fill-rule="nonzero" d="M4.6 2.6L16 0V12.4H13.8V4.2L6.8 5.8V14H4.6Z"/><ellipse cx="3.3" cy="14" rx="3.3" ry="2"/><ellipse cx="12.6" cy="12.2" rx="3.4" ry="2"/></svg>
<svg class="a" style="left:376.00px;top:130.30px;width:14.30px;height:13.50px;color:#f2f2f2;fill:#f2f2f2;overflow:visible" viewBox="0.000 0.000 16.000 16.000" preserveAspectRatio="none"><path fill-rule="nonzero" d="M4.6 2.6L16 0V12.4H13.8V4.2L6.8 5.8V14H4.6Z"/><ellipse cx="3.3" cy="14" rx="3.3" ry="2"/><ellipse cx="12.6" cy="12.2" rx="3.4" ry="2"/></svg>
<!-- select arrow -->
<svg class="a" style="left:249px;top:89px;width:10px;height:7px" viewBox="0 0 10 7"><path d="M0.8 1.2H9.2L5 5.6Z" fill="#333"/></svg>
<!-- spinner -->
<svg class="a" style="left:182px;top:143px;width:10px;height:18px" viewBox="0 0 10 18"><path d="M1 6.5L5 2L9 6.5Z" fill="#555"/><path d="M1 11.5L5 16L9 11.5Z" fill="#555"/></svg>
<!-- panel triangle -->
<svg class="a" style="left:714px;top:73px;width:13px;height:10px" viewBox="0 0 13 10"><path d="M2 2.2H11L6.5 7.8Z" fill="#555" stroke="#eee" stroke-width="1.1"/></svg>
<!-- splitter triangles -->
<svg class="a" style="left:41px;top:425px;width:6px;height:16px" viewBox="0 0 6 16"><path d="M1 2L4.4 4.5L1 7Z" fill="#aaa"/><path d="M4.4 9.2L1 11.7L4.4 14.2Z" fill="#aaa"/></svg>
<!-- scrollbar arrows -->
<svg class="a" style="left:957px;top:159px;width:18px;height:17px" viewBox="0 0 18 17"><path d="M3.6 11.2H14.2L8.9 5.6Z" fill="#444" stroke="#fff" stroke-width="1.3" stroke-linejoin="round"/></svg>
<svg class="a" style="left:957px;top:551px;width:18px;height:17px" viewBox="0 0 18 17"><path d="M3.6 5.8H14.4L9 11.4Z" fill="#444" stroke="#fff" stroke-width="1.3" stroke-linejoin="round"/></svg>
<!-- db icons -->
<svg class="a" style="left:846px;top:38px;width:20px;height:18px" viewBox="0 0 20 18">
<path d="M2 3.2C2 1.6 4.6 1 7.8 1C11 1 13.6 1.6 13.6 3.2V13.8C13.6 15.4 11 16.2 7.8 16.2C4.6 16.2 2 15.4 2 13.8Z" fill="#d0d0d0"/>
<path d="M3 4.6C4.6 5.6 11 5.6 12.6 4.6" stroke="#a0a0a0" stroke-width="0.8" fill="none"/>
<path d="M7.2 5.2H12.6V3.2L17 6.3L12.6 9.4V7.6H7.2Z" fill="#e01010"/>
<path d="M17.8 10.8H12.2V9.2L8 12.6L12.2 16V14H17.8Z" fill="#e01010"/>
</svg>
<svg class="a" style="left:935px;top:38px;width:20px;height:18px" viewBox="0 0 20 18">
<path d="M2 3.2C2 1.6 4.6 1 7.8 1C11 1 13.6 1.6 13.6 3.2V13.8C13.6 15.4 11 16.2 7.8 16.2C4.6 16.2 2 15.4 2 13.8Z" fill="#d0d0d0"/>
<path d="M3 4.6C4.6 5.6 11 5.6 12.6 4.6" stroke="#a0a0a0" stroke-width="0.8" fill="none"/>
<path d="M7.2 5.2H12.6V3.2L17 6.3L12.6 9.4V7.6H7.2Z" fill="#3c9a3c"/>
<path d="M17.8 10.8H12.2V9.2L8 12.6L12.2 16V14H17.8Z" fill="#2f8a2f"/>
</svg>

</body></html>
